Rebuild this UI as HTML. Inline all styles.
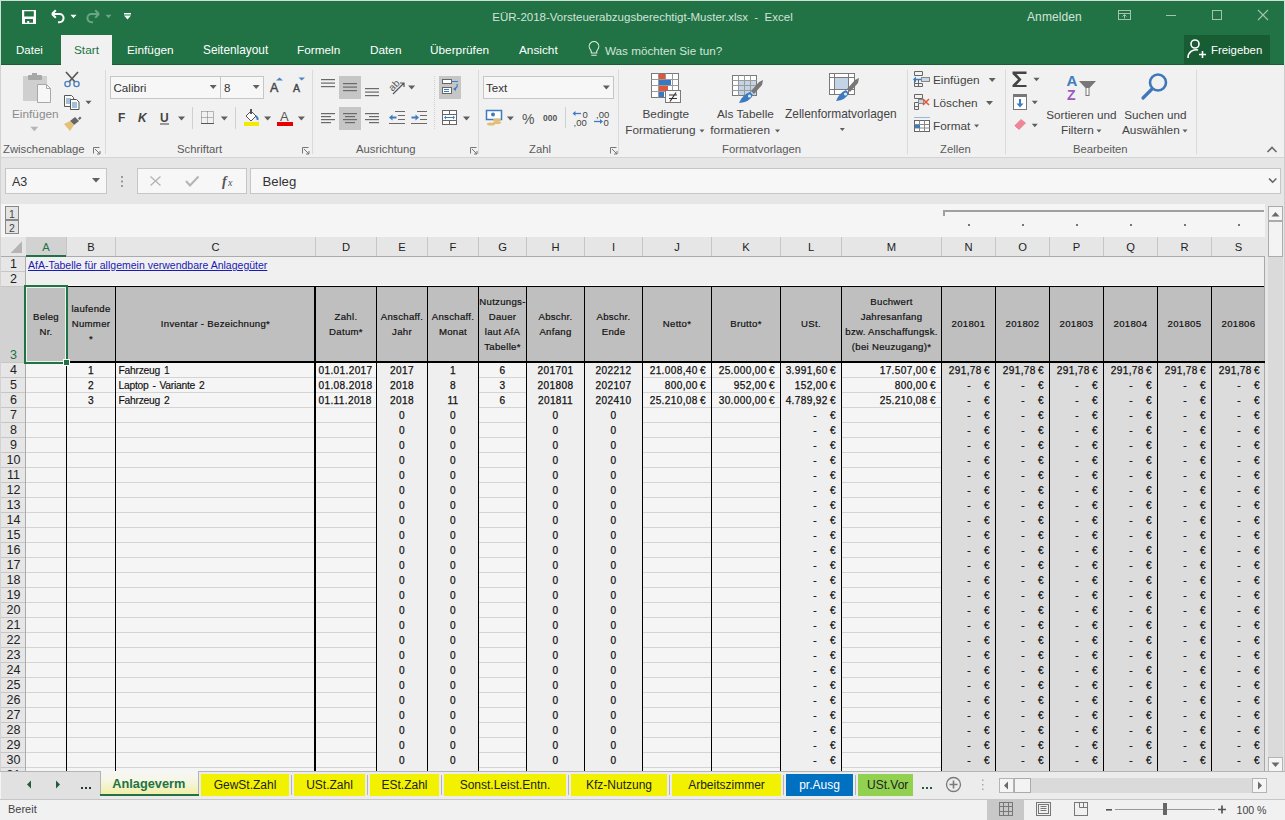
<!DOCTYPE html><html><head><meta charset="utf-8"><style>
*{margin:0;padding:0;box-sizing:border-box}
html,body{width:1285px;height:820px;overflow:hidden;background:#f1f1f1;font-family:"Liberation Sans", sans-serif;position:relative}
.c{position:absolute;height:14px;line-height:14px;font-size:10.1px;letter-spacing:0.35px;margin-top:0.7px;color:#111;white-space:nowrap;-webkit-text-stroke:0.25px #111}
.h{position:absolute;top:286.3px;height:75px;display:flex;align-items:center;justify-content:center;text-align:center;font-size:9.6px;letter-spacing:0.3px;line-height:15px;color:#111;white-space:nowrap;-webkit-text-stroke:0.2px #111}
.b{position:absolute}
</style></head><body>
<div class="b" style="left:0px;top:0px;width:1285px;height:65px;background:#217346"></div>
<div class="b" style="left:0px;top:0px;width:1285px;height:1px;background:#cfe0d5"></div>
<div class="b" style="left:0px;top:0px;width:1px;height:65px;background:#cfe0d5"></div>
<div style="position:absolute;left:442.5px;width:400px;text-align:center;top:12.07px;font-size:11.5px;line-height:11.5px;color:#d3e3d9;white-space:nowrap;">EÜR-2018-Vorsteuerabzugsberechtigt-Muster.xlsx&nbsp; - &nbsp;Excel</div>
<div style="position:absolute;left:1027px;top:10.64px;font-size:12px;line-height:12px;color:#d3e3d9;white-space:nowrap;letter-spacing:0.1px">Anmelden</div>
<div class="b" style="left:61px;top:35px;width:51px;height:30px;background:#f1f1f1"></div>
<div style="position:absolute;left:16px;top:45.27px;font-size:11.5px;line-height:11.5px;color:#ffffff;white-space:nowrap;">Datei</div>
<div style="position:absolute;left:74px;top:45.01px;font-size:11.8px;line-height:11.8px;color:#217346;white-space:nowrap;">Start</div>
<div style="position:absolute;left:127px;top:45.01px;font-size:11.8px;line-height:11.8px;color:#ffffff;white-space:nowrap;">Einfügen</div>
<div style="position:absolute;left:203px;top:44.97px;font-size:11.85px;line-height:11.85px;color:#ffffff;white-space:nowrap;">Seitenlayout</div>
<div style="position:absolute;left:297px;top:45.01px;font-size:11.8px;line-height:11.8px;color:#ffffff;white-space:nowrap;">Formeln</div>
<div style="position:absolute;left:370px;top:45.01px;font-size:11.8px;line-height:11.8px;color:#ffffff;white-space:nowrap;">Daten</div>
<div style="position:absolute;left:430px;top:45.01px;font-size:11.8px;line-height:11.8px;color:#ffffff;white-space:nowrap;">Überprüfen</div>
<div style="position:absolute;left:519px;top:45.01px;font-size:11.8px;line-height:11.8px;color:#ffffff;white-space:nowrap;">Ansicht</div>
<div style="position:absolute;left:605px;top:44.80px;font-size:11.7px;line-height:11.7px;color:#d2e3d8;white-space:nowrap;">Was möchten Sie tun?</div>
<div class="b" style="left:1184px;top:35px;width:86px;height:29px;background:#185c34"></div>
<div style="position:absolute;left:1211px;top:45.35px;font-size:11.4px;line-height:11.4px;color:#ffffff;white-space:nowrap;">Freigeben</div>
<div class="b" style="left:0px;top:65px;width:1285px;height:92px;background:#f1f1f1"></div>
<div class="b" style="left:0px;top:157px;width:1285px;height:1px;background:#d4d4d4"></div>
<div class="b" style="left:105px;top:70px;width:1px;height:84px;background:#dadada"></div>
<div class="b" style="left:312px;top:70px;width:1px;height:84px;background:#dadada"></div>
<div class="b" style="left:478px;top:70px;width:1px;height:84px;background:#dadada"></div>
<div class="b" style="left:618px;top:70px;width:1px;height:84px;background:#dadada"></div>
<div class="b" style="left:907px;top:70px;width:1px;height:84px;background:#dadada"></div>
<div class="b" style="left:1005px;top:70px;width:1px;height:84px;background:#dadada"></div>
<div class="b" style="left:1196px;top:70px;width:1px;height:84px;background:#dadada"></div>
<div style="position:absolute;left:3px;top:144.23px;font-size:11.3px;line-height:11.3px;color:#5a5a5a;white-space:nowrap;">Zwischenablage</div>
<div style="position:absolute;left:177px;top:144.23px;font-size:11.3px;line-height:11.3px;color:#5a5a5a;white-space:nowrap;">Schriftart</div>
<div style="position:absolute;left:356px;top:144.23px;font-size:11.3px;line-height:11.3px;color:#5a5a5a;white-space:nowrap;">Ausrichtung</div>
<div style="position:absolute;left:529px;top:144.23px;font-size:11.3px;line-height:11.3px;color:#5a5a5a;white-space:nowrap;">Zahl</div>
<div style="position:absolute;left:722px;top:144.23px;font-size:11.3px;line-height:11.3px;color:#5a5a5a;white-space:nowrap;">Formatvorlagen</div>
<div style="position:absolute;left:940px;top:144.23px;font-size:11.3px;line-height:11.3px;color:#5a5a5a;white-space:nowrap;">Zellen</div>
<div style="position:absolute;left:1073px;top:144.23px;font-size:11.3px;line-height:11.3px;color:#5a5a5a;white-space:nowrap;">Bearbeiten</div>
<div style="position:absolute;left:12px;top:109.01px;font-size:11.8px;line-height:11.8px;color:#8c8c8c;white-space:nowrap;">Einfügen</div>
<div class="b" style="left:110px;top:76px;width:111px;height:23px;background:#f7f7f7;border:1px solid #c6c6c6"></div>
<div class="b" style="left:220px;top:76px;width:44px;height:23px;background:#f7f7f7;border:1px solid #c6c6c6"></div>
<div style="position:absolute;left:113.5px;top:82.18px;font-size:11.6px;line-height:11.6px;color:#333;white-space:nowrap;">Calibri</div>
<div style="position:absolute;left:224px;top:82.18px;font-size:11.6px;line-height:11.6px;color:#333;white-space:nowrap;">8</div>
<div class="b" style="left:483px;top:76px;width:131px;height:23px;background:#f7f7f7;border:1px solid #c6c6c6"></div>
<div style="position:absolute;left:486px;top:82.18px;font-size:11.6px;line-height:11.6px;color:#333;white-space:nowrap;">Text</div>
<div style="position:absolute;left:642.5px;top:109.01px;font-size:11.8px;line-height:11.8px;color:#444;white-space:nowrap;">Bedingte</div>
<div style="position:absolute;left:625.3px;top:125.01px;font-size:11.8px;line-height:11.8px;color:#444;white-space:nowrap;">Formatierung</div>
<div style="position:absolute;left:717px;top:109.01px;font-size:11.8px;line-height:11.8px;color:#444;white-space:nowrap;">Als Tabelle</div>
<div style="position:absolute;left:710.3px;top:125.01px;font-size:11.8px;line-height:11.8px;color:#444;white-space:nowrap;">formatieren</div>
<div style="position:absolute;left:785px;top:108.93px;font-size:11.9px;line-height:11.9px;color:#444;white-space:nowrap;">Zellenformatvorlagen</div>
<div style="position:absolute;left:933px;top:75.31px;font-size:11.8px;line-height:11.8px;color:#444;white-space:nowrap;">Einfügen</div>
<div style="position:absolute;left:933px;top:98.31px;font-size:11.8px;line-height:11.8px;color:#444;white-space:nowrap;">Löschen</div>
<div style="position:absolute;left:933px;top:121.31px;font-size:11.8px;line-height:11.8px;color:#444;white-space:nowrap;">Format</div>
<div style="position:absolute;left:1046.3px;top:109.10px;font-size:11.7px;line-height:11.7px;color:#444;white-space:nowrap;">Sortieren und</div>
<div style="position:absolute;left:1061px;top:125.01px;font-size:11.8px;line-height:11.8px;color:#444;white-space:nowrap;">Filtern</div>
<div style="position:absolute;left:1124.2px;top:109.10px;font-size:11.7px;line-height:11.7px;color:#444;white-space:nowrap;">Suchen und</div>
<div style="position:absolute;left:1122px;top:125.01px;font-size:11.8px;line-height:11.8px;color:#444;white-space:nowrap;">Auswählen</div>
<div class="b" style="left:339px;top:76px;width:22px;height:23px;background:#c6c6c6"></div>
<div class="b" style="left:339px;top:107px;width:22px;height:23px;background:#c6c6c6"></div>
<div class="b" style="left:439px;top:76px;width:22px;height:23px;background:#c6c6c6"></div>
<div class="b" style="left:0px;top:158px;width:1285px;height:46px;background:#e6e6e6"></div>
<div class="b" style="left:5px;top:168px;width:102px;height:26px;background:#f7f7f7;border:1px solid #c6c6c6"></div>
<div style="position:absolute;left:12px;top:176.42px;font-size:12.5px;line-height:12.5px;color:#333;white-space:nowrap;">A3</div>
<div class="b" style="left:137px;top:168px;width:110px;height:26px;background:#f7f7f7;border:1px solid #c6c6c6"></div>
<div class="b" style="left:250px;top:168px;width:1031px;height:26px;background:#f7f7f7;border:1px solid #c6c6c6"></div>
<div style="position:absolute;left:262.5px;top:174.83px;font-size:13.2px;line-height:13.2px;color:#333;white-space:nowrap;">Beleg</div>
<div class="b" style="left:0px;top:204px;width:1265px;height:33px;background:#f5f5f5"></div>
<div class="b" style="left:0px;top:237px;width:1265px;height:19px;background:#e6e6e6"></div>
<div class="b" style="left:0px;top:256px;width:1265px;height:1px;background:#ababab"></div>
<div class="b" style="left:26px;top:237px;width:40px;height:18px;background:#d2d2d2"></div>
<div class="b" style="left:26px;top:255px;width:40px;height:2px;background:#217346"></div>
<svg style="position:absolute;left:0;top:237px" width="25" height="19"><polygon points="22,4.3 22,16 10.6,16" fill="#b4b4b4"/></svg>
<div class="b" style="left:66px;top:237px;width:1px;height:19px;background:#c6c6c6"></div>
<div style="position:absolute;left:-154.0px;width:400px;text-align:center;top:241.92px;font-size:11.2px;line-height:11.2px;color:#217346;white-space:nowrap;">A</div>
<div class="b" style="left:115px;top:237px;width:1px;height:19px;background:#c6c6c6"></div>
<div style="position:absolute;left:-109.0px;width:400px;text-align:center;top:241.92px;font-size:11.2px;line-height:11.2px;color:#222;white-space:nowrap;">B</div>
<div class="b" style="left:315px;top:237px;width:1px;height:19px;background:#c6c6c6"></div>
<div style="position:absolute;left:15.5px;width:400px;text-align:center;top:241.92px;font-size:11.2px;line-height:11.2px;color:#222;white-space:nowrap;">C</div>
<div class="b" style="left:376px;top:237px;width:1px;height:19px;background:#c6c6c6"></div>
<div style="position:absolute;left:146.0px;width:400px;text-align:center;top:241.92px;font-size:11.2px;line-height:11.2px;color:#222;white-space:nowrap;">D</div>
<div class="b" style="left:427px;top:237px;width:1px;height:19px;background:#c6c6c6"></div>
<div style="position:absolute;left:202.0px;width:400px;text-align:center;top:241.92px;font-size:11.2px;line-height:11.2px;color:#222;white-space:nowrap;">E</div>
<div class="b" style="left:478px;top:237px;width:1px;height:19px;background:#c6c6c6"></div>
<div style="position:absolute;left:253.0px;width:400px;text-align:center;top:241.92px;font-size:11.2px;line-height:11.2px;color:#222;white-space:nowrap;">F</div>
<div class="b" style="left:526px;top:237px;width:1px;height:19px;background:#c6c6c6"></div>
<div style="position:absolute;left:302.5px;width:400px;text-align:center;top:241.92px;font-size:11.2px;line-height:11.2px;color:#222;white-space:nowrap;">G</div>
<div class="b" style="left:584px;top:237px;width:1px;height:19px;background:#c6c6c6"></div>
<div style="position:absolute;left:355.5px;width:400px;text-align:center;top:241.92px;font-size:11.2px;line-height:11.2px;color:#222;white-space:nowrap;">H</div>
<div class="b" style="left:642px;top:237px;width:1px;height:19px;background:#c6c6c6"></div>
<div style="position:absolute;left:413.5px;width:400px;text-align:center;top:241.92px;font-size:11.2px;line-height:11.2px;color:#222;white-space:nowrap;">I</div>
<div class="b" style="left:711px;top:237px;width:1px;height:19px;background:#c6c6c6"></div>
<div style="position:absolute;left:477.0px;width:400px;text-align:center;top:241.92px;font-size:11.2px;line-height:11.2px;color:#222;white-space:nowrap;">J</div>
<div class="b" style="left:780px;top:237px;width:1px;height:19px;background:#c6c6c6"></div>
<div style="position:absolute;left:546.0px;width:400px;text-align:center;top:241.92px;font-size:11.2px;line-height:11.2px;color:#222;white-space:nowrap;">K</div>
<div class="b" style="left:841px;top:237px;width:1px;height:19px;background:#c6c6c6"></div>
<div style="position:absolute;left:611.0px;width:400px;text-align:center;top:241.92px;font-size:11.2px;line-height:11.2px;color:#222;white-space:nowrap;">L</div>
<div class="b" style="left:941px;top:237px;width:1px;height:19px;background:#c6c6c6"></div>
<div style="position:absolute;left:691.5px;width:400px;text-align:center;top:241.92px;font-size:11.2px;line-height:11.2px;color:#222;white-space:nowrap;">M</div>
<div class="b" style="left:995px;top:237px;width:1px;height:19px;background:#c6c6c6"></div>
<div style="position:absolute;left:768.5px;width:400px;text-align:center;top:241.92px;font-size:11.2px;line-height:11.2px;color:#222;white-space:nowrap;">N</div>
<div class="b" style="left:1049px;top:237px;width:1px;height:19px;background:#c6c6c6"></div>
<div style="position:absolute;left:822.5px;width:400px;text-align:center;top:241.92px;font-size:11.2px;line-height:11.2px;color:#222;white-space:nowrap;">O</div>
<div class="b" style="left:1103px;top:237px;width:1px;height:19px;background:#c6c6c6"></div>
<div style="position:absolute;left:876.5px;width:400px;text-align:center;top:241.92px;font-size:11.2px;line-height:11.2px;color:#222;white-space:nowrap;">P</div>
<div class="b" style="left:1157px;top:237px;width:1px;height:19px;background:#c6c6c6"></div>
<div style="position:absolute;left:930.5px;width:400px;text-align:center;top:241.92px;font-size:11.2px;line-height:11.2px;color:#222;white-space:nowrap;">Q</div>
<div class="b" style="left:1211px;top:237px;width:1px;height:19px;background:#c6c6c6"></div>
<div style="position:absolute;left:984.5px;width:400px;text-align:center;top:241.92px;font-size:11.2px;line-height:11.2px;color:#222;white-space:nowrap;">R</div>
<div class="b" style="left:1265px;top:237px;width:1px;height:19px;background:#c6c6c6"></div>
<div style="position:absolute;left:1038.5px;width:400px;text-align:center;top:241.92px;font-size:11.2px;line-height:11.2px;color:#222;white-space:nowrap;">S</div>
<div class="b" style="left:0px;top:257px;width:25px;height:514px;background:#e6e6e6"></div>
<div class="b" style="left:25px;top:257px;width:1px;height:514px;background:#ababab"></div>
<div class="b" style="left:0px;top:287px;width:25px;height:75px;background:#d2d2d2"></div>
<div class="b" style="left:0px;top:271px;width:25px;height:1px;background:#c6c6c6"></div>
<div style="position:absolute;left:1px;top:257.5px;font-size:12.5px;line-height:1;color:#222;white-space:nowrap;"><div style="width:25px;text-align:center">1</div></div>
<div class="b" style="left:0px;top:286px;width:25px;height:1px;background:#c6c6c6"></div>
<div style="position:absolute;left:1px;top:272.5px;font-size:12.5px;line-height:1;color:#222;white-space:nowrap;"><div style="width:25px;text-align:center">2</div></div>
<div class="b" style="left:0px;top:362px;width:25px;height:1px;background:#c6c6c6"></div>
<div style="position:absolute;left:1px;top:348.5px;font-size:12.5px;line-height:1;color:#217346;white-space:nowrap;"><div style="width:25px;text-align:center">3</div></div>
<div class="b" style="left:0px;top:377px;width:25px;height:1px;background:#c6c6c6"></div>
<div style="position:absolute;left:1px;top:363.5px;font-size:12.5px;line-height:1;color:#222;white-space:nowrap;"><div style="width:25px;text-align:center">4</div></div>
<div class="b" style="left:0px;top:392px;width:25px;height:1px;background:#c6c6c6"></div>
<div style="position:absolute;left:1px;top:378.5px;font-size:12.5px;line-height:1;color:#222;white-space:nowrap;"><div style="width:25px;text-align:center">5</div></div>
<div class="b" style="left:0px;top:407px;width:25px;height:1px;background:#c6c6c6"></div>
<div style="position:absolute;left:1px;top:393.5px;font-size:12.5px;line-height:1;color:#222;white-space:nowrap;"><div style="width:25px;text-align:center">6</div></div>
<div class="b" style="left:0px;top:422px;width:25px;height:1px;background:#c6c6c6"></div>
<div style="position:absolute;left:1px;top:408.5px;font-size:12.5px;line-height:1;color:#222;white-space:nowrap;"><div style="width:25px;text-align:center">7</div></div>
<div class="b" style="left:0px;top:437px;width:25px;height:1px;background:#c6c6c6"></div>
<div style="position:absolute;left:1px;top:423.5px;font-size:12.5px;line-height:1;color:#222;white-space:nowrap;"><div style="width:25px;text-align:center">8</div></div>
<div class="b" style="left:0px;top:452px;width:25px;height:1px;background:#c6c6c6"></div>
<div style="position:absolute;left:1px;top:438.5px;font-size:12.5px;line-height:1;color:#222;white-space:nowrap;"><div style="width:25px;text-align:center">9</div></div>
<div class="b" style="left:0px;top:467px;width:25px;height:1px;background:#c6c6c6"></div>
<div style="position:absolute;left:1px;top:453.5px;font-size:12.5px;line-height:1;color:#222;white-space:nowrap;"><div style="width:25px;text-align:center">10</div></div>
<div class="b" style="left:0px;top:482px;width:25px;height:1px;background:#c6c6c6"></div>
<div style="position:absolute;left:1px;top:468.5px;font-size:12.5px;line-height:1;color:#222;white-space:nowrap;"><div style="width:25px;text-align:center">11</div></div>
<div class="b" style="left:0px;top:497px;width:25px;height:1px;background:#c6c6c6"></div>
<div style="position:absolute;left:1px;top:483.5px;font-size:12.5px;line-height:1;color:#222;white-space:nowrap;"><div style="width:25px;text-align:center">12</div></div>
<div class="b" style="left:0px;top:512px;width:25px;height:1px;background:#c6c6c6"></div>
<div style="position:absolute;left:1px;top:498.5px;font-size:12.5px;line-height:1;color:#222;white-space:nowrap;"><div style="width:25px;text-align:center">13</div></div>
<div class="b" style="left:0px;top:527px;width:25px;height:1px;background:#c6c6c6"></div>
<div style="position:absolute;left:1px;top:513.5px;font-size:12.5px;line-height:1;color:#222;white-space:nowrap;"><div style="width:25px;text-align:center">14</div></div>
<div class="b" style="left:0px;top:542px;width:25px;height:1px;background:#c6c6c6"></div>
<div style="position:absolute;left:1px;top:528.5px;font-size:12.5px;line-height:1;color:#222;white-space:nowrap;"><div style="width:25px;text-align:center">15</div></div>
<div class="b" style="left:0px;top:557px;width:25px;height:1px;background:#c6c6c6"></div>
<div style="position:absolute;left:1px;top:543.5px;font-size:12.5px;line-height:1;color:#222;white-space:nowrap;"><div style="width:25px;text-align:center">16</div></div>
<div class="b" style="left:0px;top:572px;width:25px;height:1px;background:#c6c6c6"></div>
<div style="position:absolute;left:1px;top:558.5px;font-size:12.5px;line-height:1;color:#222;white-space:nowrap;"><div style="width:25px;text-align:center">17</div></div>
<div class="b" style="left:0px;top:587px;width:25px;height:1px;background:#c6c6c6"></div>
<div style="position:absolute;left:1px;top:573.5px;font-size:12.5px;line-height:1;color:#222;white-space:nowrap;"><div style="width:25px;text-align:center">18</div></div>
<div class="b" style="left:0px;top:602px;width:25px;height:1px;background:#c6c6c6"></div>
<div style="position:absolute;left:1px;top:588.5px;font-size:12.5px;line-height:1;color:#222;white-space:nowrap;"><div style="width:25px;text-align:center">19</div></div>
<div class="b" style="left:0px;top:617px;width:25px;height:1px;background:#c6c6c6"></div>
<div style="position:absolute;left:1px;top:603.5px;font-size:12.5px;line-height:1;color:#222;white-space:nowrap;"><div style="width:25px;text-align:center">20</div></div>
<div class="b" style="left:0px;top:632px;width:25px;height:1px;background:#c6c6c6"></div>
<div style="position:absolute;left:1px;top:618.5px;font-size:12.5px;line-height:1;color:#222;white-space:nowrap;"><div style="width:25px;text-align:center">21</div></div>
<div class="b" style="left:0px;top:647px;width:25px;height:1px;background:#c6c6c6"></div>
<div style="position:absolute;left:1px;top:633.5px;font-size:12.5px;line-height:1;color:#222;white-space:nowrap;"><div style="width:25px;text-align:center">22</div></div>
<div class="b" style="left:0px;top:662px;width:25px;height:1px;background:#c6c6c6"></div>
<div style="position:absolute;left:1px;top:648.5px;font-size:12.5px;line-height:1;color:#222;white-space:nowrap;"><div style="width:25px;text-align:center">23</div></div>
<div class="b" style="left:0px;top:677px;width:25px;height:1px;background:#c6c6c6"></div>
<div style="position:absolute;left:1px;top:663.5px;font-size:12.5px;line-height:1;color:#222;white-space:nowrap;"><div style="width:25px;text-align:center">24</div></div>
<div class="b" style="left:0px;top:692px;width:25px;height:1px;background:#c6c6c6"></div>
<div style="position:absolute;left:1px;top:678.5px;font-size:12.5px;line-height:1;color:#222;white-space:nowrap;"><div style="width:25px;text-align:center">25</div></div>
<div class="b" style="left:0px;top:707px;width:25px;height:1px;background:#c6c6c6"></div>
<div style="position:absolute;left:1px;top:693.5px;font-size:12.5px;line-height:1;color:#222;white-space:nowrap;"><div style="width:25px;text-align:center">26</div></div>
<div class="b" style="left:0px;top:722px;width:25px;height:1px;background:#c6c6c6"></div>
<div style="position:absolute;left:1px;top:708.5px;font-size:12.5px;line-height:1;color:#222;white-space:nowrap;"><div style="width:25px;text-align:center">27</div></div>
<div class="b" style="left:0px;top:737px;width:25px;height:1px;background:#c6c6c6"></div>
<div style="position:absolute;left:1px;top:723.5px;font-size:12.5px;line-height:1;color:#222;white-space:nowrap;"><div style="width:25px;text-align:center">28</div></div>
<div class="b" style="left:0px;top:752px;width:25px;height:1px;background:#c6c6c6"></div>
<div style="position:absolute;left:1px;top:738.5px;font-size:12.5px;line-height:1;color:#222;white-space:nowrap;"><div style="width:25px;text-align:center">29</div></div>
<div class="b" style="left:0px;top:767px;width:25px;height:1px;background:#c6c6c6"></div>
<div style="position:absolute;left:1px;top:753.5px;font-size:12.5px;line-height:1;color:#222;white-space:nowrap;"><div style="width:25px;text-align:center">30</div></div>
<div class="b" style="left:0px;top:782px;width:25px;height:1px;background:#c6c6c6"></div>
<div style="position:absolute;left:1px;top:768.5px;font-size:12.5px;line-height:1;color:#222;white-space:nowrap;"><div style="width:25px;text-align:center">31</div></div>
<div class="b" style="left:26px;top:257px;width:1238px;height:29px;background:#f0f0f0"></div>
<div class="b" style="left:1264px;top:257px;width:1px;height:514px;background:#a8a8a8"></div>
<div style="position:absolute;left:28px;top:260px;font-size:10.5px;line-height:1;color:#1a1ab4;white-space:nowrap;"><u>AfA-Tabelle für allgemein verwendbare Anlagegüter</u></div>
<div class="b" style="left:26px;top:285px;width:1238px;height:1px;background:#fafafa"></div>
<div class="b" style="left:26px;top:286px;width:1238px;height:1px;background:#000"></div>
<div class="b" style="left:26px;top:287px;width:1238px;height:74px;background:#bfbfbf"></div>
<div class="b" style="left:26px;top:361px;width:1239px;height:2px;background:#000"></div>
<div class="b" style="left:26px;top:363px;width:40px;height:408px;background:#f5f5f5"></div>
<div class="b" style="left:26px;top:377px;width:40px;height:1px;background:#d4d4d4"></div>
<div class="b" style="left:26px;top:392px;width:40px;height:1px;background:#d4d4d4"></div>
<div class="b" style="left:26px;top:407px;width:40px;height:1px;background:#d4d4d4"></div>
<div class="b" style="left:26px;top:422px;width:40px;height:1px;background:#d4d4d4"></div>
<div class="b" style="left:26px;top:437px;width:40px;height:1px;background:#d4d4d4"></div>
<div class="b" style="left:26px;top:452px;width:40px;height:1px;background:#d4d4d4"></div>
<div class="b" style="left:26px;top:467px;width:40px;height:1px;background:#d4d4d4"></div>
<div class="b" style="left:26px;top:482px;width:40px;height:1px;background:#d4d4d4"></div>
<div class="b" style="left:26px;top:497px;width:40px;height:1px;background:#d4d4d4"></div>
<div class="b" style="left:26px;top:512px;width:40px;height:1px;background:#d4d4d4"></div>
<div class="b" style="left:26px;top:527px;width:40px;height:1px;background:#d4d4d4"></div>
<div class="b" style="left:26px;top:542px;width:40px;height:1px;background:#d4d4d4"></div>
<div class="b" style="left:26px;top:557px;width:40px;height:1px;background:#d4d4d4"></div>
<div class="b" style="left:26px;top:572px;width:40px;height:1px;background:#d4d4d4"></div>
<div class="b" style="left:26px;top:587px;width:40px;height:1px;background:#d4d4d4"></div>
<div class="b" style="left:26px;top:602px;width:40px;height:1px;background:#d4d4d4"></div>
<div class="b" style="left:26px;top:617px;width:40px;height:1px;background:#d4d4d4"></div>
<div class="b" style="left:26px;top:632px;width:40px;height:1px;background:#d4d4d4"></div>
<div class="b" style="left:26px;top:647px;width:40px;height:1px;background:#d4d4d4"></div>
<div class="b" style="left:26px;top:662px;width:40px;height:1px;background:#d4d4d4"></div>
<div class="b" style="left:26px;top:677px;width:40px;height:1px;background:#d4d4d4"></div>
<div class="b" style="left:26px;top:692px;width:40px;height:1px;background:#d4d4d4"></div>
<div class="b" style="left:26px;top:707px;width:40px;height:1px;background:#d4d4d4"></div>
<div class="b" style="left:26px;top:722px;width:40px;height:1px;background:#d4d4d4"></div>
<div class="b" style="left:26px;top:737px;width:40px;height:1px;background:#d4d4d4"></div>
<div class="b" style="left:26px;top:752px;width:40px;height:1px;background:#d4d4d4"></div>
<div class="b" style="left:26px;top:767px;width:40px;height:1px;background:#d4d4d4"></div>
<div class="b" style="left:26px;top:782px;width:40px;height:1px;background:#d4d4d4"></div>
<div class="b" style="left:67px;top:363px;width:48px;height:408px;background:#f5f5f5"></div>
<div class="b" style="left:67px;top:377px;width:48px;height:1px;background:#d4d4d4"></div>
<div class="b" style="left:67px;top:392px;width:48px;height:1px;background:#d4d4d4"></div>
<div class="b" style="left:67px;top:407px;width:48px;height:1px;background:#d4d4d4"></div>
<div class="b" style="left:67px;top:422px;width:48px;height:1px;background:#d4d4d4"></div>
<div class="b" style="left:67px;top:437px;width:48px;height:1px;background:#d4d4d4"></div>
<div class="b" style="left:67px;top:452px;width:48px;height:1px;background:#d4d4d4"></div>
<div class="b" style="left:67px;top:467px;width:48px;height:1px;background:#d4d4d4"></div>
<div class="b" style="left:67px;top:482px;width:48px;height:1px;background:#d4d4d4"></div>
<div class="b" style="left:67px;top:497px;width:48px;height:1px;background:#d4d4d4"></div>
<div class="b" style="left:67px;top:512px;width:48px;height:1px;background:#d4d4d4"></div>
<div class="b" style="left:67px;top:527px;width:48px;height:1px;background:#d4d4d4"></div>
<div class="b" style="left:67px;top:542px;width:48px;height:1px;background:#d4d4d4"></div>
<div class="b" style="left:67px;top:557px;width:48px;height:1px;background:#d4d4d4"></div>
<div class="b" style="left:67px;top:572px;width:48px;height:1px;background:#d4d4d4"></div>
<div class="b" style="left:67px;top:587px;width:48px;height:1px;background:#d4d4d4"></div>
<div class="b" style="left:67px;top:602px;width:48px;height:1px;background:#d4d4d4"></div>
<div class="b" style="left:67px;top:617px;width:48px;height:1px;background:#d4d4d4"></div>
<div class="b" style="left:67px;top:632px;width:48px;height:1px;background:#d4d4d4"></div>
<div class="b" style="left:67px;top:647px;width:48px;height:1px;background:#d4d4d4"></div>
<div class="b" style="left:67px;top:662px;width:48px;height:1px;background:#d4d4d4"></div>
<div class="b" style="left:67px;top:677px;width:48px;height:1px;background:#d4d4d4"></div>
<div class="b" style="left:67px;top:692px;width:48px;height:1px;background:#d4d4d4"></div>
<div class="b" style="left:67px;top:707px;width:48px;height:1px;background:#d4d4d4"></div>
<div class="b" style="left:67px;top:722px;width:48px;height:1px;background:#d4d4d4"></div>
<div class="b" style="left:67px;top:737px;width:48px;height:1px;background:#d4d4d4"></div>
<div class="b" style="left:67px;top:752px;width:48px;height:1px;background:#d4d4d4"></div>
<div class="b" style="left:67px;top:767px;width:48px;height:1px;background:#d4d4d4"></div>
<div class="b" style="left:67px;top:782px;width:48px;height:1px;background:#d4d4d4"></div>
<div class="b" style="left:116px;top:363px;width:199px;height:408px;background:#f5f5f5"></div>
<div class="b" style="left:116px;top:377px;width:199px;height:1px;background:#d4d4d4"></div>
<div class="b" style="left:116px;top:392px;width:199px;height:1px;background:#d4d4d4"></div>
<div class="b" style="left:116px;top:407px;width:199px;height:1px;background:#d4d4d4"></div>
<div class="b" style="left:116px;top:422px;width:199px;height:1px;background:#d4d4d4"></div>
<div class="b" style="left:116px;top:437px;width:199px;height:1px;background:#d4d4d4"></div>
<div class="b" style="left:116px;top:452px;width:199px;height:1px;background:#d4d4d4"></div>
<div class="b" style="left:116px;top:467px;width:199px;height:1px;background:#d4d4d4"></div>
<div class="b" style="left:116px;top:482px;width:199px;height:1px;background:#d4d4d4"></div>
<div class="b" style="left:116px;top:497px;width:199px;height:1px;background:#d4d4d4"></div>
<div class="b" style="left:116px;top:512px;width:199px;height:1px;background:#d4d4d4"></div>
<div class="b" style="left:116px;top:527px;width:199px;height:1px;background:#d4d4d4"></div>
<div class="b" style="left:116px;top:542px;width:199px;height:1px;background:#d4d4d4"></div>
<div class="b" style="left:116px;top:557px;width:199px;height:1px;background:#d4d4d4"></div>
<div class="b" style="left:116px;top:572px;width:199px;height:1px;background:#d4d4d4"></div>
<div class="b" style="left:116px;top:587px;width:199px;height:1px;background:#d4d4d4"></div>
<div class="b" style="left:116px;top:602px;width:199px;height:1px;background:#d4d4d4"></div>
<div class="b" style="left:116px;top:617px;width:199px;height:1px;background:#d4d4d4"></div>
<div class="b" style="left:116px;top:632px;width:199px;height:1px;background:#d4d4d4"></div>
<div class="b" style="left:116px;top:647px;width:199px;height:1px;background:#d4d4d4"></div>
<div class="b" style="left:116px;top:662px;width:199px;height:1px;background:#d4d4d4"></div>
<div class="b" style="left:116px;top:677px;width:199px;height:1px;background:#d4d4d4"></div>
<div class="b" style="left:116px;top:692px;width:199px;height:1px;background:#d4d4d4"></div>
<div class="b" style="left:116px;top:707px;width:199px;height:1px;background:#d4d4d4"></div>
<div class="b" style="left:116px;top:722px;width:199px;height:1px;background:#d4d4d4"></div>
<div class="b" style="left:116px;top:737px;width:199px;height:1px;background:#d4d4d4"></div>
<div class="b" style="left:116px;top:752px;width:199px;height:1px;background:#d4d4d4"></div>
<div class="b" style="left:116px;top:767px;width:199px;height:1px;background:#d4d4d4"></div>
<div class="b" style="left:116px;top:782px;width:199px;height:1px;background:#d4d4d4"></div>
<div class="b" style="left:316px;top:363px;width:60px;height:408px;background:#f5f5f5"></div>
<div class="b" style="left:316px;top:377px;width:60px;height:1px;background:#d4d4d4"></div>
<div class="b" style="left:316px;top:392px;width:60px;height:1px;background:#d4d4d4"></div>
<div class="b" style="left:316px;top:407px;width:60px;height:1px;background:#d4d4d4"></div>
<div class="b" style="left:316px;top:422px;width:60px;height:1px;background:#d4d4d4"></div>
<div class="b" style="left:316px;top:437px;width:60px;height:1px;background:#d4d4d4"></div>
<div class="b" style="left:316px;top:452px;width:60px;height:1px;background:#d4d4d4"></div>
<div class="b" style="left:316px;top:467px;width:60px;height:1px;background:#d4d4d4"></div>
<div class="b" style="left:316px;top:482px;width:60px;height:1px;background:#d4d4d4"></div>
<div class="b" style="left:316px;top:497px;width:60px;height:1px;background:#d4d4d4"></div>
<div class="b" style="left:316px;top:512px;width:60px;height:1px;background:#d4d4d4"></div>
<div class="b" style="left:316px;top:527px;width:60px;height:1px;background:#d4d4d4"></div>
<div class="b" style="left:316px;top:542px;width:60px;height:1px;background:#d4d4d4"></div>
<div class="b" style="left:316px;top:557px;width:60px;height:1px;background:#d4d4d4"></div>
<div class="b" style="left:316px;top:572px;width:60px;height:1px;background:#d4d4d4"></div>
<div class="b" style="left:316px;top:587px;width:60px;height:1px;background:#d4d4d4"></div>
<div class="b" style="left:316px;top:602px;width:60px;height:1px;background:#d4d4d4"></div>
<div class="b" style="left:316px;top:617px;width:60px;height:1px;background:#d4d4d4"></div>
<div class="b" style="left:316px;top:632px;width:60px;height:1px;background:#d4d4d4"></div>
<div class="b" style="left:316px;top:647px;width:60px;height:1px;background:#d4d4d4"></div>
<div class="b" style="left:316px;top:662px;width:60px;height:1px;background:#d4d4d4"></div>
<div class="b" style="left:316px;top:677px;width:60px;height:1px;background:#d4d4d4"></div>
<div class="b" style="left:316px;top:692px;width:60px;height:1px;background:#d4d4d4"></div>
<div class="b" style="left:316px;top:707px;width:60px;height:1px;background:#d4d4d4"></div>
<div class="b" style="left:316px;top:722px;width:60px;height:1px;background:#d4d4d4"></div>
<div class="b" style="left:316px;top:737px;width:60px;height:1px;background:#d4d4d4"></div>
<div class="b" style="left:316px;top:752px;width:60px;height:1px;background:#d4d4d4"></div>
<div class="b" style="left:316px;top:767px;width:60px;height:1px;background:#d4d4d4"></div>
<div class="b" style="left:316px;top:782px;width:60px;height:1px;background:#d4d4d4"></div>
<div class="b" style="left:377px;top:363px;width:50px;height:408px;background:#efefef"></div>
<div class="b" style="left:428px;top:363px;width:50px;height:408px;background:#efefef"></div>
<div class="b" style="left:479px;top:363px;width:47px;height:408px;background:#f5f5f5"></div>
<div class="b" style="left:479px;top:377px;width:47px;height:1px;background:#d4d4d4"></div>
<div class="b" style="left:479px;top:392px;width:47px;height:1px;background:#d4d4d4"></div>
<div class="b" style="left:479px;top:407px;width:47px;height:1px;background:#d4d4d4"></div>
<div class="b" style="left:479px;top:422px;width:47px;height:1px;background:#d4d4d4"></div>
<div class="b" style="left:479px;top:437px;width:47px;height:1px;background:#d4d4d4"></div>
<div class="b" style="left:479px;top:452px;width:47px;height:1px;background:#d4d4d4"></div>
<div class="b" style="left:479px;top:467px;width:47px;height:1px;background:#d4d4d4"></div>
<div class="b" style="left:479px;top:482px;width:47px;height:1px;background:#d4d4d4"></div>
<div class="b" style="left:479px;top:497px;width:47px;height:1px;background:#d4d4d4"></div>
<div class="b" style="left:479px;top:512px;width:47px;height:1px;background:#d4d4d4"></div>
<div class="b" style="left:479px;top:527px;width:47px;height:1px;background:#d4d4d4"></div>
<div class="b" style="left:479px;top:542px;width:47px;height:1px;background:#d4d4d4"></div>
<div class="b" style="left:479px;top:557px;width:47px;height:1px;background:#d4d4d4"></div>
<div class="b" style="left:479px;top:572px;width:47px;height:1px;background:#d4d4d4"></div>
<div class="b" style="left:479px;top:587px;width:47px;height:1px;background:#d4d4d4"></div>
<div class="b" style="left:479px;top:602px;width:47px;height:1px;background:#d4d4d4"></div>
<div class="b" style="left:479px;top:617px;width:47px;height:1px;background:#d4d4d4"></div>
<div class="b" style="left:479px;top:632px;width:47px;height:1px;background:#d4d4d4"></div>
<div class="b" style="left:479px;top:647px;width:47px;height:1px;background:#d4d4d4"></div>
<div class="b" style="left:479px;top:662px;width:47px;height:1px;background:#d4d4d4"></div>
<div class="b" style="left:479px;top:677px;width:47px;height:1px;background:#d4d4d4"></div>
<div class="b" style="left:479px;top:692px;width:47px;height:1px;background:#d4d4d4"></div>
<div class="b" style="left:479px;top:707px;width:47px;height:1px;background:#d4d4d4"></div>
<div class="b" style="left:479px;top:722px;width:47px;height:1px;background:#d4d4d4"></div>
<div class="b" style="left:479px;top:737px;width:47px;height:1px;background:#d4d4d4"></div>
<div class="b" style="left:479px;top:752px;width:47px;height:1px;background:#d4d4d4"></div>
<div class="b" style="left:479px;top:767px;width:47px;height:1px;background:#d4d4d4"></div>
<div class="b" style="left:479px;top:782px;width:47px;height:1px;background:#d4d4d4"></div>
<div class="b" style="left:527px;top:363px;width:57px;height:408px;background:#efefef"></div>
<div class="b" style="left:585px;top:363px;width:57px;height:408px;background:#efefef"></div>
<div class="b" style="left:643px;top:363px;width:68px;height:408px;background:#f5f5f5"></div>
<div class="b" style="left:643px;top:377px;width:68px;height:1px;background:#d4d4d4"></div>
<div class="b" style="left:643px;top:392px;width:68px;height:1px;background:#d4d4d4"></div>
<div class="b" style="left:643px;top:407px;width:68px;height:1px;background:#d4d4d4"></div>
<div class="b" style="left:643px;top:422px;width:68px;height:1px;background:#d4d4d4"></div>
<div class="b" style="left:643px;top:437px;width:68px;height:1px;background:#d4d4d4"></div>
<div class="b" style="left:643px;top:452px;width:68px;height:1px;background:#d4d4d4"></div>
<div class="b" style="left:643px;top:467px;width:68px;height:1px;background:#d4d4d4"></div>
<div class="b" style="left:643px;top:482px;width:68px;height:1px;background:#d4d4d4"></div>
<div class="b" style="left:643px;top:497px;width:68px;height:1px;background:#d4d4d4"></div>
<div class="b" style="left:643px;top:512px;width:68px;height:1px;background:#d4d4d4"></div>
<div class="b" style="left:643px;top:527px;width:68px;height:1px;background:#d4d4d4"></div>
<div class="b" style="left:643px;top:542px;width:68px;height:1px;background:#d4d4d4"></div>
<div class="b" style="left:643px;top:557px;width:68px;height:1px;background:#d4d4d4"></div>
<div class="b" style="left:643px;top:572px;width:68px;height:1px;background:#d4d4d4"></div>
<div class="b" style="left:643px;top:587px;width:68px;height:1px;background:#d4d4d4"></div>
<div class="b" style="left:643px;top:602px;width:68px;height:1px;background:#d4d4d4"></div>
<div class="b" style="left:643px;top:617px;width:68px;height:1px;background:#d4d4d4"></div>
<div class="b" style="left:643px;top:632px;width:68px;height:1px;background:#d4d4d4"></div>
<div class="b" style="left:643px;top:647px;width:68px;height:1px;background:#d4d4d4"></div>
<div class="b" style="left:643px;top:662px;width:68px;height:1px;background:#d4d4d4"></div>
<div class="b" style="left:643px;top:677px;width:68px;height:1px;background:#d4d4d4"></div>
<div class="b" style="left:643px;top:692px;width:68px;height:1px;background:#d4d4d4"></div>
<div class="b" style="left:643px;top:707px;width:68px;height:1px;background:#d4d4d4"></div>
<div class="b" style="left:643px;top:722px;width:68px;height:1px;background:#d4d4d4"></div>
<div class="b" style="left:643px;top:737px;width:68px;height:1px;background:#d4d4d4"></div>
<div class="b" style="left:643px;top:752px;width:68px;height:1px;background:#d4d4d4"></div>
<div class="b" style="left:643px;top:767px;width:68px;height:1px;background:#d4d4d4"></div>
<div class="b" style="left:643px;top:782px;width:68px;height:1px;background:#d4d4d4"></div>
<div class="b" style="left:712px;top:363px;width:68px;height:408px;background:#f5f5f5"></div>
<div class="b" style="left:712px;top:377px;width:68px;height:1px;background:#d4d4d4"></div>
<div class="b" style="left:712px;top:392px;width:68px;height:1px;background:#d4d4d4"></div>
<div class="b" style="left:712px;top:407px;width:68px;height:1px;background:#d4d4d4"></div>
<div class="b" style="left:712px;top:422px;width:68px;height:1px;background:#d4d4d4"></div>
<div class="b" style="left:712px;top:437px;width:68px;height:1px;background:#d4d4d4"></div>
<div class="b" style="left:712px;top:452px;width:68px;height:1px;background:#d4d4d4"></div>
<div class="b" style="left:712px;top:467px;width:68px;height:1px;background:#d4d4d4"></div>
<div class="b" style="left:712px;top:482px;width:68px;height:1px;background:#d4d4d4"></div>
<div class="b" style="left:712px;top:497px;width:68px;height:1px;background:#d4d4d4"></div>
<div class="b" style="left:712px;top:512px;width:68px;height:1px;background:#d4d4d4"></div>
<div class="b" style="left:712px;top:527px;width:68px;height:1px;background:#d4d4d4"></div>
<div class="b" style="left:712px;top:542px;width:68px;height:1px;background:#d4d4d4"></div>
<div class="b" style="left:712px;top:557px;width:68px;height:1px;background:#d4d4d4"></div>
<div class="b" style="left:712px;top:572px;width:68px;height:1px;background:#d4d4d4"></div>
<div class="b" style="left:712px;top:587px;width:68px;height:1px;background:#d4d4d4"></div>
<div class="b" style="left:712px;top:602px;width:68px;height:1px;background:#d4d4d4"></div>
<div class="b" style="left:712px;top:617px;width:68px;height:1px;background:#d4d4d4"></div>
<div class="b" style="left:712px;top:632px;width:68px;height:1px;background:#d4d4d4"></div>
<div class="b" style="left:712px;top:647px;width:68px;height:1px;background:#d4d4d4"></div>
<div class="b" style="left:712px;top:662px;width:68px;height:1px;background:#d4d4d4"></div>
<div class="b" style="left:712px;top:677px;width:68px;height:1px;background:#d4d4d4"></div>
<div class="b" style="left:712px;top:692px;width:68px;height:1px;background:#d4d4d4"></div>
<div class="b" style="left:712px;top:707px;width:68px;height:1px;background:#d4d4d4"></div>
<div class="b" style="left:712px;top:722px;width:68px;height:1px;background:#d4d4d4"></div>
<div class="b" style="left:712px;top:737px;width:68px;height:1px;background:#d4d4d4"></div>
<div class="b" style="left:712px;top:752px;width:68px;height:1px;background:#d4d4d4"></div>
<div class="b" style="left:712px;top:767px;width:68px;height:1px;background:#d4d4d4"></div>
<div class="b" style="left:712px;top:782px;width:68px;height:1px;background:#d4d4d4"></div>
<div class="b" style="left:781px;top:363px;width:60px;height:408px;background:#efefef"></div>
<div class="b" style="left:842px;top:363px;width:99px;height:408px;background:#f5f5f5"></div>
<div class="b" style="left:842px;top:377px;width:99px;height:1px;background:#d4d4d4"></div>
<div class="b" style="left:842px;top:392px;width:99px;height:1px;background:#d4d4d4"></div>
<div class="b" style="left:842px;top:407px;width:99px;height:1px;background:#d4d4d4"></div>
<div class="b" style="left:842px;top:422px;width:99px;height:1px;background:#d4d4d4"></div>
<div class="b" style="left:842px;top:437px;width:99px;height:1px;background:#d4d4d4"></div>
<div class="b" style="left:842px;top:452px;width:99px;height:1px;background:#d4d4d4"></div>
<div class="b" style="left:842px;top:467px;width:99px;height:1px;background:#d4d4d4"></div>
<div class="b" style="left:842px;top:482px;width:99px;height:1px;background:#d4d4d4"></div>
<div class="b" style="left:842px;top:497px;width:99px;height:1px;background:#d4d4d4"></div>
<div class="b" style="left:842px;top:512px;width:99px;height:1px;background:#d4d4d4"></div>
<div class="b" style="left:842px;top:527px;width:99px;height:1px;background:#d4d4d4"></div>
<div class="b" style="left:842px;top:542px;width:99px;height:1px;background:#d4d4d4"></div>
<div class="b" style="left:842px;top:557px;width:99px;height:1px;background:#d4d4d4"></div>
<div class="b" style="left:842px;top:572px;width:99px;height:1px;background:#d4d4d4"></div>
<div class="b" style="left:842px;top:587px;width:99px;height:1px;background:#d4d4d4"></div>
<div class="b" style="left:842px;top:602px;width:99px;height:1px;background:#d4d4d4"></div>
<div class="b" style="left:842px;top:617px;width:99px;height:1px;background:#d4d4d4"></div>
<div class="b" style="left:842px;top:632px;width:99px;height:1px;background:#d4d4d4"></div>
<div class="b" style="left:842px;top:647px;width:99px;height:1px;background:#d4d4d4"></div>
<div class="b" style="left:842px;top:662px;width:99px;height:1px;background:#d4d4d4"></div>
<div class="b" style="left:842px;top:677px;width:99px;height:1px;background:#d4d4d4"></div>
<div class="b" style="left:842px;top:692px;width:99px;height:1px;background:#d4d4d4"></div>
<div class="b" style="left:842px;top:707px;width:99px;height:1px;background:#d4d4d4"></div>
<div class="b" style="left:842px;top:722px;width:99px;height:1px;background:#d4d4d4"></div>
<div class="b" style="left:842px;top:737px;width:99px;height:1px;background:#d4d4d4"></div>
<div class="b" style="left:842px;top:752px;width:99px;height:1px;background:#d4d4d4"></div>
<div class="b" style="left:842px;top:767px;width:99px;height:1px;background:#d4d4d4"></div>
<div class="b" style="left:842px;top:782px;width:99px;height:1px;background:#d4d4d4"></div>
<div class="b" style="left:942px;top:363px;width:53px;height:408px;background:#dcdcdc"></div>
<div class="b" style="left:996px;top:363px;width:53px;height:408px;background:#dcdcdc"></div>
<div class="b" style="left:1050px;top:363px;width:53px;height:408px;background:#dcdcdc"></div>
<div class="b" style="left:1104px;top:363px;width:53px;height:408px;background:#dcdcdc"></div>
<div class="b" style="left:1158px;top:363px;width:53px;height:408px;background:#dcdcdc"></div>
<div class="b" style="left:1212px;top:363px;width:52px;height:408px;background:#dcdcdc"></div>
<div class="b" style="left:66px;top:286px;width:1px;height:485px;background:#000"></div>
<div class="b" style="left:115px;top:286px;width:1px;height:485px;background:#000"></div>
<div class="b" style="left:314px;top:286px;width:2px;height:485px;background:#000"></div>
<div class="b" style="left:376px;top:286px;width:1px;height:485px;background:#000"></div>
<div class="b" style="left:427px;top:286px;width:1px;height:485px;background:#000"></div>
<div class="b" style="left:478px;top:286px;width:1px;height:485px;background:#000"></div>
<div class="b" style="left:526px;top:286px;width:1px;height:485px;background:#000"></div>
<div class="b" style="left:584px;top:286px;width:1px;height:485px;background:#000"></div>
<div class="b" style="left:642px;top:286px;width:1px;height:485px;background:#000"></div>
<div class="b" style="left:711px;top:286px;width:1px;height:485px;background:#000"></div>
<div class="b" style="left:780px;top:286px;width:1px;height:485px;background:#000"></div>
<div class="b" style="left:841px;top:286px;width:1px;height:485px;background:#000"></div>
<div class="b" style="left:941px;top:286px;width:1px;height:485px;background:#000"></div>
<div class="b" style="left:995px;top:286px;width:1px;height:485px;background:#000"></div>
<div class="b" style="left:1049px;top:286px;width:1px;height:485px;background:#000"></div>
<div class="b" style="left:1103px;top:286px;width:1px;height:485px;background:#000"></div>
<div class="b" style="left:1157px;top:286px;width:1px;height:485px;background:#000"></div>
<div class="b" style="left:1211px;top:286px;width:1px;height:485px;background:#000"></div>
<div class="h" style="left:26px;width:40px">Beleg<br>Nr.</div>
<div class="h" style="left:67px;width:48px">laufende<br>Nummer<br>*</div>
<div class="h" style="left:116px;width:199px">Inventar - Bezeichnung*</div>
<div class="h" style="left:316px;width:60px">Zahl.<br>Datum*</div>
<div class="h" style="left:377px;width:50px">Anschaff.<br>Jahr</div>
<div class="h" style="left:428px;width:50px">Anschaff.<br>Monat</div>
<div class="h" style="left:479px;width:47px">Nutzungs-<br>Dauer<br>laut AfA<br>Tabelle*</div>
<div class="h" style="left:527px;width:57px">Abschr.<br>Anfang</div>
<div class="h" style="left:585px;width:57px">Abschr.<br>Ende</div>
<div class="h" style="left:643px;width:68px">Netto*</div>
<div class="h" style="left:712px;width:68px">Brutto*</div>
<div class="h" style="left:781px;width:60px">USt.</div>
<div class="h" style="left:842px;width:99px">Buchwert<br>Jahresanfang<br>bzw. Anschaffungsk.<br>(bei Neuzugang)*</div>
<div class="h" style="left:942px;width:53px">201801</div>
<div class="h" style="left:996px;width:53px">201802</div>
<div class="h" style="left:1050px;width:53px">201803</div>
<div class="h" style="left:1104px;width:53px">201804</div>
<div class="h" style="left:1158px;width:53px">201805</div>
<div class="h" style="left:1212px;width:53px">201806</div>
<div class="c" style="left:67px;top:363px;width:48px;text-align:center;">1</div>
<div class="c" style="left:116px;top:363px;width:199px;text-align:left;padding-left:2.5px"><span style="font-size:10.3px;letter-spacing:-0.25px;word-spacing:1.3px;-webkit-text-stroke:0.15px #111">Fahrzeug 1</span></div>
<div class="c" style="left:316px;top:363px;width:60px;text-align:left;padding-left:2.5px">01.01.2017</div>
<div class="c" style="left:377px;top:363px;width:50px;text-align:center;">2017</div>
<div class="c" style="left:428px;top:363px;width:50px;text-align:center;">1</div>
<div class="c" style="left:479px;top:363px;width:47px;text-align:center;">6</div>
<div class="c" style="left:527px;top:363px;width:57px;text-align:center;">201701</div>
<div class="c" style="left:585px;top:363px;width:57px;text-align:center;">202212</div>
<div class="c" style="left:623px;top:363px;width:83px;text-align:right">21.008,40<span style="margin-left:2.3px">€</span></div>
<div class="c" style="left:692px;top:363px;width:83px;text-align:right">25.000,00<span style="margin-left:2.3px">€</span></div>
<div class="c" style="left:761px;top:363px;width:75px;text-align:right">3.991,60<span style="margin-left:2.3px">€</span></div>
<div class="c" style="left:822px;top:363px;width:114px;text-align:right">17.507,00<span style="margin-left:2.3px">€</span></div>
<div class="c" style="left:922px;top:363px;width:68px;text-align:right">291,78<span style="margin-left:2.3px">€</span></div>
<div class="c" style="left:976px;top:363px;width:68px;text-align:right">291,78<span style="margin-left:2.3px">€</span></div>
<div class="c" style="left:1030px;top:363px;width:68px;text-align:right">291,78<span style="margin-left:2.3px">€</span></div>
<div class="c" style="left:1084px;top:363px;width:68px;text-align:right">291,78<span style="margin-left:2.3px">€</span></div>
<div class="c" style="left:1138px;top:363px;width:68px;text-align:right">291,78<span style="margin-left:2.3px">€</span></div>
<div class="c" style="left:1192px;top:363px;width:68px;text-align:right">291,78<span style="margin-left:2.3px">€</span></div>
<div class="c" style="left:67px;top:378px;width:48px;text-align:center;">2</div>
<div class="c" style="left:116px;top:378px;width:199px;text-align:left;padding-left:2.5px"><span style="font-size:10.3px;letter-spacing:-0.25px;word-spacing:1.3px;-webkit-text-stroke:0.15px #111">Laptop - Variante 2</span></div>
<div class="c" style="left:316px;top:378px;width:60px;text-align:left;padding-left:2.5px">01.08.2018</div>
<div class="c" style="left:377px;top:378px;width:50px;text-align:center;">2018</div>
<div class="c" style="left:428px;top:378px;width:50px;text-align:center;">8</div>
<div class="c" style="left:479px;top:378px;width:47px;text-align:center;">3</div>
<div class="c" style="left:527px;top:378px;width:57px;text-align:center;">201808</div>
<div class="c" style="left:585px;top:378px;width:57px;text-align:center;">202107</div>
<div class="c" style="left:623px;top:378px;width:83px;text-align:right">800,00<span style="margin-left:2.3px">€</span></div>
<div class="c" style="left:692px;top:378px;width:83px;text-align:right">952,00<span style="margin-left:2.3px">€</span></div>
<div class="c" style="left:761px;top:378px;width:75px;text-align:right">152,00<span style="margin-left:2.3px">€</span></div>
<div class="c" style="left:822px;top:378px;width:114px;text-align:right">800,00<span style="margin-left:2.3px">€</span></div>
<div class="c" style="left:965px;top:378px;width:8px;text-align:center">-</div>
<div class="c" style="left:942px;top:378px;width:48px;text-align:right">€</div>
<div class="c" style="left:1019px;top:378px;width:8px;text-align:center">-</div>
<div class="c" style="left:996px;top:378px;width:48px;text-align:right">€</div>
<div class="c" style="left:1073px;top:378px;width:8px;text-align:center">-</div>
<div class="c" style="left:1050px;top:378px;width:48px;text-align:right">€</div>
<div class="c" style="left:1127px;top:378px;width:8px;text-align:center">-</div>
<div class="c" style="left:1104px;top:378px;width:48px;text-align:right">€</div>
<div class="c" style="left:1181px;top:378px;width:8px;text-align:center">-</div>
<div class="c" style="left:1158px;top:378px;width:48px;text-align:right">€</div>
<div class="c" style="left:1235px;top:378px;width:8px;text-align:center">-</div>
<div class="c" style="left:1212px;top:378px;width:48px;text-align:right">€</div>
<div class="c" style="left:67px;top:393px;width:48px;text-align:center;">3</div>
<div class="c" style="left:116px;top:393px;width:199px;text-align:left;padding-left:2.5px"><span style="font-size:10.3px;letter-spacing:-0.25px;word-spacing:1.3px;-webkit-text-stroke:0.15px #111">Fahrzeug 2</span></div>
<div class="c" style="left:316px;top:393px;width:60px;text-align:left;padding-left:2.5px">01.11.2018</div>
<div class="c" style="left:377px;top:393px;width:50px;text-align:center;">2018</div>
<div class="c" style="left:428px;top:393px;width:50px;text-align:center;">11</div>
<div class="c" style="left:479px;top:393px;width:47px;text-align:center;">6</div>
<div class="c" style="left:527px;top:393px;width:57px;text-align:center;">201811</div>
<div class="c" style="left:585px;top:393px;width:57px;text-align:center;">202410</div>
<div class="c" style="left:623px;top:393px;width:83px;text-align:right">25.210,08<span style="margin-left:2.3px">€</span></div>
<div class="c" style="left:692px;top:393px;width:83px;text-align:right">30.000,00<span style="margin-left:2.3px">€</span></div>
<div class="c" style="left:761px;top:393px;width:75px;text-align:right">4.789,92<span style="margin-left:2.3px">€</span></div>
<div class="c" style="left:822px;top:393px;width:114px;text-align:right">25.210,08<span style="margin-left:2.3px">€</span></div>
<div class="c" style="left:965px;top:393px;width:8px;text-align:center">-</div>
<div class="c" style="left:942px;top:393px;width:48px;text-align:right">€</div>
<div class="c" style="left:1019px;top:393px;width:8px;text-align:center">-</div>
<div class="c" style="left:996px;top:393px;width:48px;text-align:right">€</div>
<div class="c" style="left:1073px;top:393px;width:8px;text-align:center">-</div>
<div class="c" style="left:1050px;top:393px;width:48px;text-align:right">€</div>
<div class="c" style="left:1127px;top:393px;width:8px;text-align:center">-</div>
<div class="c" style="left:1104px;top:393px;width:48px;text-align:right">€</div>
<div class="c" style="left:1181px;top:393px;width:8px;text-align:center">-</div>
<div class="c" style="left:1158px;top:393px;width:48px;text-align:right">€</div>
<div class="c" style="left:1235px;top:393px;width:8px;text-align:center">-</div>
<div class="c" style="left:1212px;top:393px;width:48px;text-align:right">€</div>
<div class="c" style="left:377px;top:408px;width:50px;text-align:center;">0</div>
<div class="c" style="left:428px;top:408px;width:50px;text-align:center;">0</div>
<div class="c" style="left:527px;top:408px;width:57px;text-align:center;">0</div>
<div class="c" style="left:585px;top:408px;width:57px;text-align:center;">0</div>
<div class="c" style="left:811px;top:408px;width:8px;text-align:center">-</div>
<div class="c" style="left:781px;top:408px;width:55px;text-align:right">€</div>
<div class="c" style="left:965px;top:408px;width:8px;text-align:center">-</div>
<div class="c" style="left:942px;top:408px;width:48px;text-align:right">€</div>
<div class="c" style="left:1019px;top:408px;width:8px;text-align:center">-</div>
<div class="c" style="left:996px;top:408px;width:48px;text-align:right">€</div>
<div class="c" style="left:1073px;top:408px;width:8px;text-align:center">-</div>
<div class="c" style="left:1050px;top:408px;width:48px;text-align:right">€</div>
<div class="c" style="left:1127px;top:408px;width:8px;text-align:center">-</div>
<div class="c" style="left:1104px;top:408px;width:48px;text-align:right">€</div>
<div class="c" style="left:1181px;top:408px;width:8px;text-align:center">-</div>
<div class="c" style="left:1158px;top:408px;width:48px;text-align:right">€</div>
<div class="c" style="left:1235px;top:408px;width:8px;text-align:center">-</div>
<div class="c" style="left:1212px;top:408px;width:48px;text-align:right">€</div>
<div class="c" style="left:377px;top:423px;width:50px;text-align:center;">0</div>
<div class="c" style="left:428px;top:423px;width:50px;text-align:center;">0</div>
<div class="c" style="left:527px;top:423px;width:57px;text-align:center;">0</div>
<div class="c" style="left:585px;top:423px;width:57px;text-align:center;">0</div>
<div class="c" style="left:811px;top:423px;width:8px;text-align:center">-</div>
<div class="c" style="left:781px;top:423px;width:55px;text-align:right">€</div>
<div class="c" style="left:965px;top:423px;width:8px;text-align:center">-</div>
<div class="c" style="left:942px;top:423px;width:48px;text-align:right">€</div>
<div class="c" style="left:1019px;top:423px;width:8px;text-align:center">-</div>
<div class="c" style="left:996px;top:423px;width:48px;text-align:right">€</div>
<div class="c" style="left:1073px;top:423px;width:8px;text-align:center">-</div>
<div class="c" style="left:1050px;top:423px;width:48px;text-align:right">€</div>
<div class="c" style="left:1127px;top:423px;width:8px;text-align:center">-</div>
<div class="c" style="left:1104px;top:423px;width:48px;text-align:right">€</div>
<div class="c" style="left:1181px;top:423px;width:8px;text-align:center">-</div>
<div class="c" style="left:1158px;top:423px;width:48px;text-align:right">€</div>
<div class="c" style="left:1235px;top:423px;width:8px;text-align:center">-</div>
<div class="c" style="left:1212px;top:423px;width:48px;text-align:right">€</div>
<div class="c" style="left:377px;top:438px;width:50px;text-align:center;">0</div>
<div class="c" style="left:428px;top:438px;width:50px;text-align:center;">0</div>
<div class="c" style="left:527px;top:438px;width:57px;text-align:center;">0</div>
<div class="c" style="left:585px;top:438px;width:57px;text-align:center;">0</div>
<div class="c" style="left:811px;top:438px;width:8px;text-align:center">-</div>
<div class="c" style="left:781px;top:438px;width:55px;text-align:right">€</div>
<div class="c" style="left:965px;top:438px;width:8px;text-align:center">-</div>
<div class="c" style="left:942px;top:438px;width:48px;text-align:right">€</div>
<div class="c" style="left:1019px;top:438px;width:8px;text-align:center">-</div>
<div class="c" style="left:996px;top:438px;width:48px;text-align:right">€</div>
<div class="c" style="left:1073px;top:438px;width:8px;text-align:center">-</div>
<div class="c" style="left:1050px;top:438px;width:48px;text-align:right">€</div>
<div class="c" style="left:1127px;top:438px;width:8px;text-align:center">-</div>
<div class="c" style="left:1104px;top:438px;width:48px;text-align:right">€</div>
<div class="c" style="left:1181px;top:438px;width:8px;text-align:center">-</div>
<div class="c" style="left:1158px;top:438px;width:48px;text-align:right">€</div>
<div class="c" style="left:1235px;top:438px;width:8px;text-align:center">-</div>
<div class="c" style="left:1212px;top:438px;width:48px;text-align:right">€</div>
<div class="c" style="left:377px;top:453px;width:50px;text-align:center;">0</div>
<div class="c" style="left:428px;top:453px;width:50px;text-align:center;">0</div>
<div class="c" style="left:527px;top:453px;width:57px;text-align:center;">0</div>
<div class="c" style="left:585px;top:453px;width:57px;text-align:center;">0</div>
<div class="c" style="left:811px;top:453px;width:8px;text-align:center">-</div>
<div class="c" style="left:781px;top:453px;width:55px;text-align:right">€</div>
<div class="c" style="left:965px;top:453px;width:8px;text-align:center">-</div>
<div class="c" style="left:942px;top:453px;width:48px;text-align:right">€</div>
<div class="c" style="left:1019px;top:453px;width:8px;text-align:center">-</div>
<div class="c" style="left:996px;top:453px;width:48px;text-align:right">€</div>
<div class="c" style="left:1073px;top:453px;width:8px;text-align:center">-</div>
<div class="c" style="left:1050px;top:453px;width:48px;text-align:right">€</div>
<div class="c" style="left:1127px;top:453px;width:8px;text-align:center">-</div>
<div class="c" style="left:1104px;top:453px;width:48px;text-align:right">€</div>
<div class="c" style="left:1181px;top:453px;width:8px;text-align:center">-</div>
<div class="c" style="left:1158px;top:453px;width:48px;text-align:right">€</div>
<div class="c" style="left:1235px;top:453px;width:8px;text-align:center">-</div>
<div class="c" style="left:1212px;top:453px;width:48px;text-align:right">€</div>
<div class="c" style="left:377px;top:468px;width:50px;text-align:center;">0</div>
<div class="c" style="left:428px;top:468px;width:50px;text-align:center;">0</div>
<div class="c" style="left:527px;top:468px;width:57px;text-align:center;">0</div>
<div class="c" style="left:585px;top:468px;width:57px;text-align:center;">0</div>
<div class="c" style="left:811px;top:468px;width:8px;text-align:center">-</div>
<div class="c" style="left:781px;top:468px;width:55px;text-align:right">€</div>
<div class="c" style="left:965px;top:468px;width:8px;text-align:center">-</div>
<div class="c" style="left:942px;top:468px;width:48px;text-align:right">€</div>
<div class="c" style="left:1019px;top:468px;width:8px;text-align:center">-</div>
<div class="c" style="left:996px;top:468px;width:48px;text-align:right">€</div>
<div class="c" style="left:1073px;top:468px;width:8px;text-align:center">-</div>
<div class="c" style="left:1050px;top:468px;width:48px;text-align:right">€</div>
<div class="c" style="left:1127px;top:468px;width:8px;text-align:center">-</div>
<div class="c" style="left:1104px;top:468px;width:48px;text-align:right">€</div>
<div class="c" style="left:1181px;top:468px;width:8px;text-align:center">-</div>
<div class="c" style="left:1158px;top:468px;width:48px;text-align:right">€</div>
<div class="c" style="left:1235px;top:468px;width:8px;text-align:center">-</div>
<div class="c" style="left:1212px;top:468px;width:48px;text-align:right">€</div>
<div class="c" style="left:377px;top:483px;width:50px;text-align:center;">0</div>
<div class="c" style="left:428px;top:483px;width:50px;text-align:center;">0</div>
<div class="c" style="left:527px;top:483px;width:57px;text-align:center;">0</div>
<div class="c" style="left:585px;top:483px;width:57px;text-align:center;">0</div>
<div class="c" style="left:811px;top:483px;width:8px;text-align:center">-</div>
<div class="c" style="left:781px;top:483px;width:55px;text-align:right">€</div>
<div class="c" style="left:965px;top:483px;width:8px;text-align:center">-</div>
<div class="c" style="left:942px;top:483px;width:48px;text-align:right">€</div>
<div class="c" style="left:1019px;top:483px;width:8px;text-align:center">-</div>
<div class="c" style="left:996px;top:483px;width:48px;text-align:right">€</div>
<div class="c" style="left:1073px;top:483px;width:8px;text-align:center">-</div>
<div class="c" style="left:1050px;top:483px;width:48px;text-align:right">€</div>
<div class="c" style="left:1127px;top:483px;width:8px;text-align:center">-</div>
<div class="c" style="left:1104px;top:483px;width:48px;text-align:right">€</div>
<div class="c" style="left:1181px;top:483px;width:8px;text-align:center">-</div>
<div class="c" style="left:1158px;top:483px;width:48px;text-align:right">€</div>
<div class="c" style="left:1235px;top:483px;width:8px;text-align:center">-</div>
<div class="c" style="left:1212px;top:483px;width:48px;text-align:right">€</div>
<div class="c" style="left:377px;top:498px;width:50px;text-align:center;">0</div>
<div class="c" style="left:428px;top:498px;width:50px;text-align:center;">0</div>
<div class="c" style="left:527px;top:498px;width:57px;text-align:center;">0</div>
<div class="c" style="left:585px;top:498px;width:57px;text-align:center;">0</div>
<div class="c" style="left:811px;top:498px;width:8px;text-align:center">-</div>
<div class="c" style="left:781px;top:498px;width:55px;text-align:right">€</div>
<div class="c" style="left:965px;top:498px;width:8px;text-align:center">-</div>
<div class="c" style="left:942px;top:498px;width:48px;text-align:right">€</div>
<div class="c" style="left:1019px;top:498px;width:8px;text-align:center">-</div>
<div class="c" style="left:996px;top:498px;width:48px;text-align:right">€</div>
<div class="c" style="left:1073px;top:498px;width:8px;text-align:center">-</div>
<div class="c" style="left:1050px;top:498px;width:48px;text-align:right">€</div>
<div class="c" style="left:1127px;top:498px;width:8px;text-align:center">-</div>
<div class="c" style="left:1104px;top:498px;width:48px;text-align:right">€</div>
<div class="c" style="left:1181px;top:498px;width:8px;text-align:center">-</div>
<div class="c" style="left:1158px;top:498px;width:48px;text-align:right">€</div>
<div class="c" style="left:1235px;top:498px;width:8px;text-align:center">-</div>
<div class="c" style="left:1212px;top:498px;width:48px;text-align:right">€</div>
<div class="c" style="left:377px;top:513px;width:50px;text-align:center;">0</div>
<div class="c" style="left:428px;top:513px;width:50px;text-align:center;">0</div>
<div class="c" style="left:527px;top:513px;width:57px;text-align:center;">0</div>
<div class="c" style="left:585px;top:513px;width:57px;text-align:center;">0</div>
<div class="c" style="left:811px;top:513px;width:8px;text-align:center">-</div>
<div class="c" style="left:781px;top:513px;width:55px;text-align:right">€</div>
<div class="c" style="left:965px;top:513px;width:8px;text-align:center">-</div>
<div class="c" style="left:942px;top:513px;width:48px;text-align:right">€</div>
<div class="c" style="left:1019px;top:513px;width:8px;text-align:center">-</div>
<div class="c" style="left:996px;top:513px;width:48px;text-align:right">€</div>
<div class="c" style="left:1073px;top:513px;width:8px;text-align:center">-</div>
<div class="c" style="left:1050px;top:513px;width:48px;text-align:right">€</div>
<div class="c" style="left:1127px;top:513px;width:8px;text-align:center">-</div>
<div class="c" style="left:1104px;top:513px;width:48px;text-align:right">€</div>
<div class="c" style="left:1181px;top:513px;width:8px;text-align:center">-</div>
<div class="c" style="left:1158px;top:513px;width:48px;text-align:right">€</div>
<div class="c" style="left:1235px;top:513px;width:8px;text-align:center">-</div>
<div class="c" style="left:1212px;top:513px;width:48px;text-align:right">€</div>
<div class="c" style="left:377px;top:528px;width:50px;text-align:center;">0</div>
<div class="c" style="left:428px;top:528px;width:50px;text-align:center;">0</div>
<div class="c" style="left:527px;top:528px;width:57px;text-align:center;">0</div>
<div class="c" style="left:585px;top:528px;width:57px;text-align:center;">0</div>
<div class="c" style="left:811px;top:528px;width:8px;text-align:center">-</div>
<div class="c" style="left:781px;top:528px;width:55px;text-align:right">€</div>
<div class="c" style="left:965px;top:528px;width:8px;text-align:center">-</div>
<div class="c" style="left:942px;top:528px;width:48px;text-align:right">€</div>
<div class="c" style="left:1019px;top:528px;width:8px;text-align:center">-</div>
<div class="c" style="left:996px;top:528px;width:48px;text-align:right">€</div>
<div class="c" style="left:1073px;top:528px;width:8px;text-align:center">-</div>
<div class="c" style="left:1050px;top:528px;width:48px;text-align:right">€</div>
<div class="c" style="left:1127px;top:528px;width:8px;text-align:center">-</div>
<div class="c" style="left:1104px;top:528px;width:48px;text-align:right">€</div>
<div class="c" style="left:1181px;top:528px;width:8px;text-align:center">-</div>
<div class="c" style="left:1158px;top:528px;width:48px;text-align:right">€</div>
<div class="c" style="left:1235px;top:528px;width:8px;text-align:center">-</div>
<div class="c" style="left:1212px;top:528px;width:48px;text-align:right">€</div>
<div class="c" style="left:377px;top:543px;width:50px;text-align:center;">0</div>
<div class="c" style="left:428px;top:543px;width:50px;text-align:center;">0</div>
<div class="c" style="left:527px;top:543px;width:57px;text-align:center;">0</div>
<div class="c" style="left:585px;top:543px;width:57px;text-align:center;">0</div>
<div class="c" style="left:811px;top:543px;width:8px;text-align:center">-</div>
<div class="c" style="left:781px;top:543px;width:55px;text-align:right">€</div>
<div class="c" style="left:965px;top:543px;width:8px;text-align:center">-</div>
<div class="c" style="left:942px;top:543px;width:48px;text-align:right">€</div>
<div class="c" style="left:1019px;top:543px;width:8px;text-align:center">-</div>
<div class="c" style="left:996px;top:543px;width:48px;text-align:right">€</div>
<div class="c" style="left:1073px;top:543px;width:8px;text-align:center">-</div>
<div class="c" style="left:1050px;top:543px;width:48px;text-align:right">€</div>
<div class="c" style="left:1127px;top:543px;width:8px;text-align:center">-</div>
<div class="c" style="left:1104px;top:543px;width:48px;text-align:right">€</div>
<div class="c" style="left:1181px;top:543px;width:8px;text-align:center">-</div>
<div class="c" style="left:1158px;top:543px;width:48px;text-align:right">€</div>
<div class="c" style="left:1235px;top:543px;width:8px;text-align:center">-</div>
<div class="c" style="left:1212px;top:543px;width:48px;text-align:right">€</div>
<div class="c" style="left:377px;top:558px;width:50px;text-align:center;">0</div>
<div class="c" style="left:428px;top:558px;width:50px;text-align:center;">0</div>
<div class="c" style="left:527px;top:558px;width:57px;text-align:center;">0</div>
<div class="c" style="left:585px;top:558px;width:57px;text-align:center;">0</div>
<div class="c" style="left:811px;top:558px;width:8px;text-align:center">-</div>
<div class="c" style="left:781px;top:558px;width:55px;text-align:right">€</div>
<div class="c" style="left:965px;top:558px;width:8px;text-align:center">-</div>
<div class="c" style="left:942px;top:558px;width:48px;text-align:right">€</div>
<div class="c" style="left:1019px;top:558px;width:8px;text-align:center">-</div>
<div class="c" style="left:996px;top:558px;width:48px;text-align:right">€</div>
<div class="c" style="left:1073px;top:558px;width:8px;text-align:center">-</div>
<div class="c" style="left:1050px;top:558px;width:48px;text-align:right">€</div>
<div class="c" style="left:1127px;top:558px;width:8px;text-align:center">-</div>
<div class="c" style="left:1104px;top:558px;width:48px;text-align:right">€</div>
<div class="c" style="left:1181px;top:558px;width:8px;text-align:center">-</div>
<div class="c" style="left:1158px;top:558px;width:48px;text-align:right">€</div>
<div class="c" style="left:1235px;top:558px;width:8px;text-align:center">-</div>
<div class="c" style="left:1212px;top:558px;width:48px;text-align:right">€</div>
<div class="c" style="left:377px;top:573px;width:50px;text-align:center;">0</div>
<div class="c" style="left:428px;top:573px;width:50px;text-align:center;">0</div>
<div class="c" style="left:527px;top:573px;width:57px;text-align:center;">0</div>
<div class="c" style="left:585px;top:573px;width:57px;text-align:center;">0</div>
<div class="c" style="left:811px;top:573px;width:8px;text-align:center">-</div>
<div class="c" style="left:781px;top:573px;width:55px;text-align:right">€</div>
<div class="c" style="left:965px;top:573px;width:8px;text-align:center">-</div>
<div class="c" style="left:942px;top:573px;width:48px;text-align:right">€</div>
<div class="c" style="left:1019px;top:573px;width:8px;text-align:center">-</div>
<div class="c" style="left:996px;top:573px;width:48px;text-align:right">€</div>
<div class="c" style="left:1073px;top:573px;width:8px;text-align:center">-</div>
<div class="c" style="left:1050px;top:573px;width:48px;text-align:right">€</div>
<div class="c" style="left:1127px;top:573px;width:8px;text-align:center">-</div>
<div class="c" style="left:1104px;top:573px;width:48px;text-align:right">€</div>
<div class="c" style="left:1181px;top:573px;width:8px;text-align:center">-</div>
<div class="c" style="left:1158px;top:573px;width:48px;text-align:right">€</div>
<div class="c" style="left:1235px;top:573px;width:8px;text-align:center">-</div>
<div class="c" style="left:1212px;top:573px;width:48px;text-align:right">€</div>
<div class="c" style="left:377px;top:588px;width:50px;text-align:center;">0</div>
<div class="c" style="left:428px;top:588px;width:50px;text-align:center;">0</div>
<div class="c" style="left:527px;top:588px;width:57px;text-align:center;">0</div>
<div class="c" style="left:585px;top:588px;width:57px;text-align:center;">0</div>
<div class="c" style="left:811px;top:588px;width:8px;text-align:center">-</div>
<div class="c" style="left:781px;top:588px;width:55px;text-align:right">€</div>
<div class="c" style="left:965px;top:588px;width:8px;text-align:center">-</div>
<div class="c" style="left:942px;top:588px;width:48px;text-align:right">€</div>
<div class="c" style="left:1019px;top:588px;width:8px;text-align:center">-</div>
<div class="c" style="left:996px;top:588px;width:48px;text-align:right">€</div>
<div class="c" style="left:1073px;top:588px;width:8px;text-align:center">-</div>
<div class="c" style="left:1050px;top:588px;width:48px;text-align:right">€</div>
<div class="c" style="left:1127px;top:588px;width:8px;text-align:center">-</div>
<div class="c" style="left:1104px;top:588px;width:48px;text-align:right">€</div>
<div class="c" style="left:1181px;top:588px;width:8px;text-align:center">-</div>
<div class="c" style="left:1158px;top:588px;width:48px;text-align:right">€</div>
<div class="c" style="left:1235px;top:588px;width:8px;text-align:center">-</div>
<div class="c" style="left:1212px;top:588px;width:48px;text-align:right">€</div>
<div class="c" style="left:377px;top:603px;width:50px;text-align:center;">0</div>
<div class="c" style="left:428px;top:603px;width:50px;text-align:center;">0</div>
<div class="c" style="left:527px;top:603px;width:57px;text-align:center;">0</div>
<div class="c" style="left:585px;top:603px;width:57px;text-align:center;">0</div>
<div class="c" style="left:811px;top:603px;width:8px;text-align:center">-</div>
<div class="c" style="left:781px;top:603px;width:55px;text-align:right">€</div>
<div class="c" style="left:965px;top:603px;width:8px;text-align:center">-</div>
<div class="c" style="left:942px;top:603px;width:48px;text-align:right">€</div>
<div class="c" style="left:1019px;top:603px;width:8px;text-align:center">-</div>
<div class="c" style="left:996px;top:603px;width:48px;text-align:right">€</div>
<div class="c" style="left:1073px;top:603px;width:8px;text-align:center">-</div>
<div class="c" style="left:1050px;top:603px;width:48px;text-align:right">€</div>
<div class="c" style="left:1127px;top:603px;width:8px;text-align:center">-</div>
<div class="c" style="left:1104px;top:603px;width:48px;text-align:right">€</div>
<div class="c" style="left:1181px;top:603px;width:8px;text-align:center">-</div>
<div class="c" style="left:1158px;top:603px;width:48px;text-align:right">€</div>
<div class="c" style="left:1235px;top:603px;width:8px;text-align:center">-</div>
<div class="c" style="left:1212px;top:603px;width:48px;text-align:right">€</div>
<div class="c" style="left:377px;top:618px;width:50px;text-align:center;">0</div>
<div class="c" style="left:428px;top:618px;width:50px;text-align:center;">0</div>
<div class="c" style="left:527px;top:618px;width:57px;text-align:center;">0</div>
<div class="c" style="left:585px;top:618px;width:57px;text-align:center;">0</div>
<div class="c" style="left:811px;top:618px;width:8px;text-align:center">-</div>
<div class="c" style="left:781px;top:618px;width:55px;text-align:right">€</div>
<div class="c" style="left:965px;top:618px;width:8px;text-align:center">-</div>
<div class="c" style="left:942px;top:618px;width:48px;text-align:right">€</div>
<div class="c" style="left:1019px;top:618px;width:8px;text-align:center">-</div>
<div class="c" style="left:996px;top:618px;width:48px;text-align:right">€</div>
<div class="c" style="left:1073px;top:618px;width:8px;text-align:center">-</div>
<div class="c" style="left:1050px;top:618px;width:48px;text-align:right">€</div>
<div class="c" style="left:1127px;top:618px;width:8px;text-align:center">-</div>
<div class="c" style="left:1104px;top:618px;width:48px;text-align:right">€</div>
<div class="c" style="left:1181px;top:618px;width:8px;text-align:center">-</div>
<div class="c" style="left:1158px;top:618px;width:48px;text-align:right">€</div>
<div class="c" style="left:1235px;top:618px;width:8px;text-align:center">-</div>
<div class="c" style="left:1212px;top:618px;width:48px;text-align:right">€</div>
<div class="c" style="left:377px;top:633px;width:50px;text-align:center;">0</div>
<div class="c" style="left:428px;top:633px;width:50px;text-align:center;">0</div>
<div class="c" style="left:527px;top:633px;width:57px;text-align:center;">0</div>
<div class="c" style="left:585px;top:633px;width:57px;text-align:center;">0</div>
<div class="c" style="left:811px;top:633px;width:8px;text-align:center">-</div>
<div class="c" style="left:781px;top:633px;width:55px;text-align:right">€</div>
<div class="c" style="left:965px;top:633px;width:8px;text-align:center">-</div>
<div class="c" style="left:942px;top:633px;width:48px;text-align:right">€</div>
<div class="c" style="left:1019px;top:633px;width:8px;text-align:center">-</div>
<div class="c" style="left:996px;top:633px;width:48px;text-align:right">€</div>
<div class="c" style="left:1073px;top:633px;width:8px;text-align:center">-</div>
<div class="c" style="left:1050px;top:633px;width:48px;text-align:right">€</div>
<div class="c" style="left:1127px;top:633px;width:8px;text-align:center">-</div>
<div class="c" style="left:1104px;top:633px;width:48px;text-align:right">€</div>
<div class="c" style="left:1181px;top:633px;width:8px;text-align:center">-</div>
<div class="c" style="left:1158px;top:633px;width:48px;text-align:right">€</div>
<div class="c" style="left:1235px;top:633px;width:8px;text-align:center">-</div>
<div class="c" style="left:1212px;top:633px;width:48px;text-align:right">€</div>
<div class="c" style="left:377px;top:648px;width:50px;text-align:center;">0</div>
<div class="c" style="left:428px;top:648px;width:50px;text-align:center;">0</div>
<div class="c" style="left:527px;top:648px;width:57px;text-align:center;">0</div>
<div class="c" style="left:585px;top:648px;width:57px;text-align:center;">0</div>
<div class="c" style="left:811px;top:648px;width:8px;text-align:center">-</div>
<div class="c" style="left:781px;top:648px;width:55px;text-align:right">€</div>
<div class="c" style="left:965px;top:648px;width:8px;text-align:center">-</div>
<div class="c" style="left:942px;top:648px;width:48px;text-align:right">€</div>
<div class="c" style="left:1019px;top:648px;width:8px;text-align:center">-</div>
<div class="c" style="left:996px;top:648px;width:48px;text-align:right">€</div>
<div class="c" style="left:1073px;top:648px;width:8px;text-align:center">-</div>
<div class="c" style="left:1050px;top:648px;width:48px;text-align:right">€</div>
<div class="c" style="left:1127px;top:648px;width:8px;text-align:center">-</div>
<div class="c" style="left:1104px;top:648px;width:48px;text-align:right">€</div>
<div class="c" style="left:1181px;top:648px;width:8px;text-align:center">-</div>
<div class="c" style="left:1158px;top:648px;width:48px;text-align:right">€</div>
<div class="c" style="left:1235px;top:648px;width:8px;text-align:center">-</div>
<div class="c" style="left:1212px;top:648px;width:48px;text-align:right">€</div>
<div class="c" style="left:377px;top:663px;width:50px;text-align:center;">0</div>
<div class="c" style="left:428px;top:663px;width:50px;text-align:center;">0</div>
<div class="c" style="left:527px;top:663px;width:57px;text-align:center;">0</div>
<div class="c" style="left:585px;top:663px;width:57px;text-align:center;">0</div>
<div class="c" style="left:811px;top:663px;width:8px;text-align:center">-</div>
<div class="c" style="left:781px;top:663px;width:55px;text-align:right">€</div>
<div class="c" style="left:965px;top:663px;width:8px;text-align:center">-</div>
<div class="c" style="left:942px;top:663px;width:48px;text-align:right">€</div>
<div class="c" style="left:1019px;top:663px;width:8px;text-align:center">-</div>
<div class="c" style="left:996px;top:663px;width:48px;text-align:right">€</div>
<div class="c" style="left:1073px;top:663px;width:8px;text-align:center">-</div>
<div class="c" style="left:1050px;top:663px;width:48px;text-align:right">€</div>
<div class="c" style="left:1127px;top:663px;width:8px;text-align:center">-</div>
<div class="c" style="left:1104px;top:663px;width:48px;text-align:right">€</div>
<div class="c" style="left:1181px;top:663px;width:8px;text-align:center">-</div>
<div class="c" style="left:1158px;top:663px;width:48px;text-align:right">€</div>
<div class="c" style="left:1235px;top:663px;width:8px;text-align:center">-</div>
<div class="c" style="left:1212px;top:663px;width:48px;text-align:right">€</div>
<div class="c" style="left:377px;top:678px;width:50px;text-align:center;">0</div>
<div class="c" style="left:428px;top:678px;width:50px;text-align:center;">0</div>
<div class="c" style="left:527px;top:678px;width:57px;text-align:center;">0</div>
<div class="c" style="left:585px;top:678px;width:57px;text-align:center;">0</div>
<div class="c" style="left:811px;top:678px;width:8px;text-align:center">-</div>
<div class="c" style="left:781px;top:678px;width:55px;text-align:right">€</div>
<div class="c" style="left:965px;top:678px;width:8px;text-align:center">-</div>
<div class="c" style="left:942px;top:678px;width:48px;text-align:right">€</div>
<div class="c" style="left:1019px;top:678px;width:8px;text-align:center">-</div>
<div class="c" style="left:996px;top:678px;width:48px;text-align:right">€</div>
<div class="c" style="left:1073px;top:678px;width:8px;text-align:center">-</div>
<div class="c" style="left:1050px;top:678px;width:48px;text-align:right">€</div>
<div class="c" style="left:1127px;top:678px;width:8px;text-align:center">-</div>
<div class="c" style="left:1104px;top:678px;width:48px;text-align:right">€</div>
<div class="c" style="left:1181px;top:678px;width:8px;text-align:center">-</div>
<div class="c" style="left:1158px;top:678px;width:48px;text-align:right">€</div>
<div class="c" style="left:1235px;top:678px;width:8px;text-align:center">-</div>
<div class="c" style="left:1212px;top:678px;width:48px;text-align:right">€</div>
<div class="c" style="left:377px;top:693px;width:50px;text-align:center;">0</div>
<div class="c" style="left:428px;top:693px;width:50px;text-align:center;">0</div>
<div class="c" style="left:527px;top:693px;width:57px;text-align:center;">0</div>
<div class="c" style="left:585px;top:693px;width:57px;text-align:center;">0</div>
<div class="c" style="left:811px;top:693px;width:8px;text-align:center">-</div>
<div class="c" style="left:781px;top:693px;width:55px;text-align:right">€</div>
<div class="c" style="left:965px;top:693px;width:8px;text-align:center">-</div>
<div class="c" style="left:942px;top:693px;width:48px;text-align:right">€</div>
<div class="c" style="left:1019px;top:693px;width:8px;text-align:center">-</div>
<div class="c" style="left:996px;top:693px;width:48px;text-align:right">€</div>
<div class="c" style="left:1073px;top:693px;width:8px;text-align:center">-</div>
<div class="c" style="left:1050px;top:693px;width:48px;text-align:right">€</div>
<div class="c" style="left:1127px;top:693px;width:8px;text-align:center">-</div>
<div class="c" style="left:1104px;top:693px;width:48px;text-align:right">€</div>
<div class="c" style="left:1181px;top:693px;width:8px;text-align:center">-</div>
<div class="c" style="left:1158px;top:693px;width:48px;text-align:right">€</div>
<div class="c" style="left:1235px;top:693px;width:8px;text-align:center">-</div>
<div class="c" style="left:1212px;top:693px;width:48px;text-align:right">€</div>
<div class="c" style="left:377px;top:708px;width:50px;text-align:center;">0</div>
<div class="c" style="left:428px;top:708px;width:50px;text-align:center;">0</div>
<div class="c" style="left:527px;top:708px;width:57px;text-align:center;">0</div>
<div class="c" style="left:585px;top:708px;width:57px;text-align:center;">0</div>
<div class="c" style="left:811px;top:708px;width:8px;text-align:center">-</div>
<div class="c" style="left:781px;top:708px;width:55px;text-align:right">€</div>
<div class="c" style="left:965px;top:708px;width:8px;text-align:center">-</div>
<div class="c" style="left:942px;top:708px;width:48px;text-align:right">€</div>
<div class="c" style="left:1019px;top:708px;width:8px;text-align:center">-</div>
<div class="c" style="left:996px;top:708px;width:48px;text-align:right">€</div>
<div class="c" style="left:1073px;top:708px;width:8px;text-align:center">-</div>
<div class="c" style="left:1050px;top:708px;width:48px;text-align:right">€</div>
<div class="c" style="left:1127px;top:708px;width:8px;text-align:center">-</div>
<div class="c" style="left:1104px;top:708px;width:48px;text-align:right">€</div>
<div class="c" style="left:1181px;top:708px;width:8px;text-align:center">-</div>
<div class="c" style="left:1158px;top:708px;width:48px;text-align:right">€</div>
<div class="c" style="left:1235px;top:708px;width:8px;text-align:center">-</div>
<div class="c" style="left:1212px;top:708px;width:48px;text-align:right">€</div>
<div class="c" style="left:377px;top:723px;width:50px;text-align:center;">0</div>
<div class="c" style="left:428px;top:723px;width:50px;text-align:center;">0</div>
<div class="c" style="left:527px;top:723px;width:57px;text-align:center;">0</div>
<div class="c" style="left:585px;top:723px;width:57px;text-align:center;">0</div>
<div class="c" style="left:811px;top:723px;width:8px;text-align:center">-</div>
<div class="c" style="left:781px;top:723px;width:55px;text-align:right">€</div>
<div class="c" style="left:965px;top:723px;width:8px;text-align:center">-</div>
<div class="c" style="left:942px;top:723px;width:48px;text-align:right">€</div>
<div class="c" style="left:1019px;top:723px;width:8px;text-align:center">-</div>
<div class="c" style="left:996px;top:723px;width:48px;text-align:right">€</div>
<div class="c" style="left:1073px;top:723px;width:8px;text-align:center">-</div>
<div class="c" style="left:1050px;top:723px;width:48px;text-align:right">€</div>
<div class="c" style="left:1127px;top:723px;width:8px;text-align:center">-</div>
<div class="c" style="left:1104px;top:723px;width:48px;text-align:right">€</div>
<div class="c" style="left:1181px;top:723px;width:8px;text-align:center">-</div>
<div class="c" style="left:1158px;top:723px;width:48px;text-align:right">€</div>
<div class="c" style="left:1235px;top:723px;width:8px;text-align:center">-</div>
<div class="c" style="left:1212px;top:723px;width:48px;text-align:right">€</div>
<div class="c" style="left:377px;top:738px;width:50px;text-align:center;">0</div>
<div class="c" style="left:428px;top:738px;width:50px;text-align:center;">0</div>
<div class="c" style="left:527px;top:738px;width:57px;text-align:center;">0</div>
<div class="c" style="left:585px;top:738px;width:57px;text-align:center;">0</div>
<div class="c" style="left:811px;top:738px;width:8px;text-align:center">-</div>
<div class="c" style="left:781px;top:738px;width:55px;text-align:right">€</div>
<div class="c" style="left:965px;top:738px;width:8px;text-align:center">-</div>
<div class="c" style="left:942px;top:738px;width:48px;text-align:right">€</div>
<div class="c" style="left:1019px;top:738px;width:8px;text-align:center">-</div>
<div class="c" style="left:996px;top:738px;width:48px;text-align:right">€</div>
<div class="c" style="left:1073px;top:738px;width:8px;text-align:center">-</div>
<div class="c" style="left:1050px;top:738px;width:48px;text-align:right">€</div>
<div class="c" style="left:1127px;top:738px;width:8px;text-align:center">-</div>
<div class="c" style="left:1104px;top:738px;width:48px;text-align:right">€</div>
<div class="c" style="left:1181px;top:738px;width:8px;text-align:center">-</div>
<div class="c" style="left:1158px;top:738px;width:48px;text-align:right">€</div>
<div class="c" style="left:1235px;top:738px;width:8px;text-align:center">-</div>
<div class="c" style="left:1212px;top:738px;width:48px;text-align:right">€</div>
<div class="c" style="left:377px;top:753px;width:50px;text-align:center;">0</div>
<div class="c" style="left:428px;top:753px;width:50px;text-align:center;">0</div>
<div class="c" style="left:527px;top:753px;width:57px;text-align:center;">0</div>
<div class="c" style="left:585px;top:753px;width:57px;text-align:center;">0</div>
<div class="c" style="left:811px;top:753px;width:8px;text-align:center">-</div>
<div class="c" style="left:781px;top:753px;width:55px;text-align:right">€</div>
<div class="c" style="left:965px;top:753px;width:8px;text-align:center">-</div>
<div class="c" style="left:942px;top:753px;width:48px;text-align:right">€</div>
<div class="c" style="left:1019px;top:753px;width:8px;text-align:center">-</div>
<div class="c" style="left:996px;top:753px;width:48px;text-align:right">€</div>
<div class="c" style="left:1073px;top:753px;width:8px;text-align:center">-</div>
<div class="c" style="left:1050px;top:753px;width:48px;text-align:right">€</div>
<div class="c" style="left:1127px;top:753px;width:8px;text-align:center">-</div>
<div class="c" style="left:1104px;top:753px;width:48px;text-align:right">€</div>
<div class="c" style="left:1181px;top:753px;width:8px;text-align:center">-</div>
<div class="c" style="left:1158px;top:753px;width:48px;text-align:right">€</div>
<div class="c" style="left:1235px;top:753px;width:8px;text-align:center">-</div>
<div class="c" style="left:1212px;top:753px;width:48px;text-align:right">€</div>
<div class="c" style="left:377px;top:768px;width:50px;text-align:center;">0</div>
<div class="c" style="left:428px;top:768px;width:50px;text-align:center;">0</div>
<div class="c" style="left:527px;top:768px;width:57px;text-align:center;">0</div>
<div class="c" style="left:585px;top:768px;width:57px;text-align:center;">0</div>
<div class="c" style="left:811px;top:768px;width:8px;text-align:center">-</div>
<div class="c" style="left:781px;top:768px;width:55px;text-align:right">€</div>
<div class="c" style="left:965px;top:768px;width:8px;text-align:center">-</div>
<div class="c" style="left:942px;top:768px;width:48px;text-align:right">€</div>
<div class="c" style="left:1019px;top:768px;width:8px;text-align:center">-</div>
<div class="c" style="left:996px;top:768px;width:48px;text-align:right">€</div>
<div class="c" style="left:1073px;top:768px;width:8px;text-align:center">-</div>
<div class="c" style="left:1050px;top:768px;width:48px;text-align:right">€</div>
<div class="c" style="left:1127px;top:768px;width:8px;text-align:center">-</div>
<div class="c" style="left:1104px;top:768px;width:48px;text-align:right">€</div>
<div class="c" style="left:1181px;top:768px;width:8px;text-align:center">-</div>
<div class="c" style="left:1158px;top:768px;width:48px;text-align:right">€</div>
<div class="c" style="left:1235px;top:768px;width:8px;text-align:center">-</div>
<div class="c" style="left:1212px;top:768px;width:48px;text-align:right">€</div>
<div class="b" style="left:24px;top:285px;width:44px;height:79px;border:2px solid #217346"></div>
<div class="b" style="left:26px;top:287px;width:40px;height:75px;border:1px solid #e8f5ec"></div>
<div class="b" style="left:64px;top:360px;width:5px;height:5px;background:#217346;outline:1px solid #fff"></div>
<div class="b" style="left:1265px;top:204px;width:20px;height:567px;background:#e6e6e6"></div>
<div class="b" style="left:1268px;top:221px;width:15px;height:536px;background:#dadada"></div>
<div class="b" style="left:1268px;top:206px;width:15px;height:15px;background:#f5f5f5;border:1px solid #ababab"></div>
<div class="b" style="left:1268px;top:221px;width:15px;height:36px;background:#f3f3f3;border:1px solid #ababab"></div>
<div class="b" style="left:1268px;top:757px;width:15px;height:15px;background:#f5f5f5;border:1px solid #b4b4b4"></div>
<div class="b" style="left:0px;top:65px;width:1px;height:755px;background:#d2d2d2"></div>
<div class="b" style="left:1284px;top:65px;width:1px;height:755px;background:#cdcdcd"></div>
<div class="b" style="left:1284px;top:0px;width:1px;height:65px;background:#cfe0d5"></div>
<div class="b" style="left:1px;top:64px;width:60px;height:1px;background:#1d5c37"></div>
<div class="b" style="left:112px;top:64px;width:1172px;height:1px;background:#1d5c37"></div>
<div class="b" style="left:0px;top:771px;width:1285px;height:29px;background:#ececec"></div>
<div class="b" style="left:0px;top:771px;width:1285px;height:1px;background:#b4b4b4"></div>
<div class="b" style="left:0px;top:772px;width:100px;height:27px;background:#e1e1e1"></div>
<div class="b" style="left:0px;top:772px;width:1px;height:27px;background:#f4f4f4"></div>
<div class="b" style="left:100px;top:771px;width:1px;height:25px;background:#b4b4b4"></div>
<div class="b" style="left:101px;top:771px;width:97px;height:23px;background:linear-gradient(#f6f6f4 0%,#f6f6ea 35%,#f2efa8 100%)"></div>
<div class="b" style="left:198px;top:771px;width:1px;height:25px;background:#b4b4b4"></div>
<div class="b" style="left:100px;top:794px;width:99px;height:2px;background:#217346"></div>
<div style="position:absolute;left:112.3px;top:778.21px;font-size:12.75px;line-height:12.75px;color:#217346;white-space:nowrap;"><b>Anlageverm</b></div>
<div class="b" style="left:201px;top:774px;width:88px;height:22px;background:#f2f200"></div>
<div style="position:absolute;left:45.0px;width:400px;text-align:center;top:778.84px;font-size:12px;line-height:12px;color:#222;white-space:nowrap;">GewSt.Zahl</div>
<div class="b" style="left:291px;top:775px;width:1px;height:20px;background:#b4b4b4"></div>
<div class="b" style="left:294px;top:774px;width:71px;height:22px;background:#f2f200"></div>
<div style="position:absolute;left:129.5px;width:400px;text-align:center;top:778.84px;font-size:12px;line-height:12px;color:#222;white-space:nowrap;">USt.Zahl</div>
<div class="b" style="left:367px;top:775px;width:1px;height:20px;background:#b4b4b4"></div>
<div class="b" style="left:370px;top:774px;width:69px;height:22px;background:#f2f200"></div>
<div style="position:absolute;left:204.5px;width:400px;text-align:center;top:778.84px;font-size:12px;line-height:12px;color:#222;white-space:nowrap;">ESt.Zahl</div>
<div class="b" style="left:441px;top:775px;width:1px;height:20px;background:#b4b4b4"></div>
<div class="b" style="left:444px;top:774px;width:122px;height:22px;background:#f2f200"></div>
<div style="position:absolute;left:305.0px;width:400px;text-align:center;top:778.84px;font-size:12px;line-height:12px;color:#222;white-space:nowrap;">Sonst.Leist.Entn.</div>
<div class="b" style="left:568px;top:775px;width:1px;height:20px;background:#b4b4b4"></div>
<div class="b" style="left:571px;top:774px;width:96px;height:22px;background:#f2f200"></div>
<div style="position:absolute;left:419.0px;width:400px;text-align:center;top:778.84px;font-size:12px;line-height:12px;color:#222;white-space:nowrap;">Kfz-Nutzung</div>
<div class="b" style="left:669px;top:775px;width:1px;height:20px;background:#b4b4b4"></div>
<div class="b" style="left:672px;top:774px;width:109px;height:22px;background:#f2f200"></div>
<div style="position:absolute;left:526.5px;width:400px;text-align:center;top:778.84px;font-size:12px;line-height:12px;color:#222;white-space:nowrap;">Arbeitszimmer</div>
<div class="b" style="left:783px;top:775px;width:1px;height:20px;background:#b4b4b4"></div>
<div class="b" style="left:786px;top:774px;width:67px;height:22px;background:#0070c0"></div>
<div style="position:absolute;left:619.5px;width:400px;text-align:center;top:778.84px;font-size:12px;line-height:12px;color:#fff;white-space:nowrap;">pr.Ausg</div>
<div class="b" style="left:855px;top:775px;width:1px;height:20px;background:#b4b4b4"></div>
<div class="b" style="left:858px;top:774px;width:55px;height:22px;background:#92d050"></div>
<div style="position:absolute;left:867px;top:778.84px;font-size:12px;line-height:12px;color:#222;white-space:nowrap;">USt.Vor</div>
<div class="b" style="left:915px;top:775px;width:1px;height:20px;background:#b4b4b4"></div>
<div class="b" style="left:913px;top:772px;width:9px;height:24px;background:#ececec"></div>
<div class="b" style="left:999px;top:778px;width:268px;height:15px;background:#dadada"></div>
<div class="b" style="left:999px;top:778px;width:15px;height:15px;background:#f5f5f5;border:1px solid #b4b4b4"></div>
<div class="b" style="left:1014px;top:778px;width:17px;height:15px;background:#f3f3f3;border:1px solid #ababab"></div>
<div class="b" style="left:1252px;top:778px;width:15px;height:15px;background:#f5f5f5;border:1px solid #b4b4b4"></div>
<div class="b" style="left:0px;top:799px;width:1285px;height:1px;background:#c6c6c6"></div>
<div class="b" style="left:0px;top:800px;width:1285px;height:20px;background:#f1f1f1"></div>
<div style="position:absolute;left:8px;top:804.19px;font-size:11px;line-height:11px;color:#444;white-space:nowrap;">Bereit</div>
<div class="b" style="left:987px;top:800px;width:37px;height:20px;background:#c8c8c8"></div>
<div style="position:absolute;left:1236.5px;top:805.03px;font-size:10.6px;line-height:10.6px;color:#444;white-space:nowrap;">100 %</div>
<svg style="position:absolute;left:0;top:0" width="1285" height="820"><path d="M22,10h14v14h-14z M24.2,11.2h9.6v5.3h-9.6z M25,19h8v3.8h-3.8v-1.8h-2v1.8h-2.2z" fill="#fff" fill-rule="evenodd"/><path d="M52,14 l3.8,-3.8 M52,14 l3.8,3.8 M52,14 h7.5 a4.1,4.1 0 0 1 0,8.2 h-1.5" stroke="#fff" stroke-width="2" fill="none"/><polygon points="70.5,14.75 76.5,14.75 73.5,18.25" fill="#fff"/><path d="M99,14 l-3.8,-3.8 M99,14 l-3.8,3.8 M99,14 h-7.5 a4.1,4.1 0 0 0 0,8.2 h1.5" stroke="#6aa585" stroke-width="2" fill="none"/><polygon points="105.5,14.75 111.5,14.75 108.5,18.25" fill="#6aa585"/><rect x="124" y="13" width="7" height="1.5" fill="#fff"/><polygon points="124.0,15.5 131.0,15.5 127.5,19.5" fill="#fff"/><rect x="1118.5" y="10.5" width="12" height="9" stroke="#a3c5b0" fill="none"/><path d="M1118.5,13.5h12 M1124.5,18.5v-4 M1122.5,16.5l2,-2l2,2" stroke="#a3c5b0" fill="none"/><rect x="1166" y="15" width="10" height="1" fill="#a3c5b0"/><rect x="1212.5" y="10.5" width="9" height="9" stroke="#a3c5b0" fill="none"/><path d="M1258,10 l10,10 M1268,10 l-10,10" stroke="#a3c5b0" stroke-width="1.1"/><path d="M590.3,49.5 a4.8,4.8 0 1 1 7.4,0 l-1,1.8 v1.7 h-5.4 v-1.7 z M591.3,55.2h5.4" stroke="#e0ece4" stroke-width="1.1" fill="none"/><circle cx="1195" cy="44" r="4" stroke="#fff" stroke-width="1.6" fill="none"/><path d="M1188,58 a8,8 0 0 1 10,-8" stroke="#fff" stroke-width="1.6" fill="none"/><path d="M1199,54.5h7 M1202.5,51v7" stroke="#fff" stroke-width="1.6"/><path d="M1267.5,152 l4.5,-4.5 l4.5,4.5" stroke="#6a6a6a" stroke-width="1.6" fill="none"/><rect x="23" y="76" width="24" height="25" fill="#cfcfcf"/><rect x="28" y="75" width="14" height="5" rx="1" fill="#a7a7a7"/><rect x="32" y="73" width="5" height="3" fill="#a7a7a7"/><path d="M37.5,84.5 h9 l4,4 v14 h-13 z" fill="#f7f7f7" stroke="#a8a8a8"/><path d="M46.5,84.5v4h4" fill="none" stroke="#a8a8a8"/><polygon points="30.299999999999997,126.75 38.3,126.75 34.3,131.25" fill="#b5b5b5"/><path d="M66,72 l9,10 M78,72 l-9,10" stroke="#5b5b5b" stroke-width="1.8"/><circle cx="67.5" cy="84" r="2.6" stroke="#4d82b8" stroke-width="1.4" fill="none"/><circle cx="76.5" cy="84" r="2.6" stroke="#4d82b8" stroke-width="1.4" fill="none"/><path d="M64.5,95.5h7l2,2v9h-9z" fill="#fafafa" stroke="#555"/><path d="M66,99h5 M66,101h5 M66,103h5" stroke="#4d82b8"/><path d="M70.5,99.5h6l2.5,2.5v7.5h-8.5z" fill="#fafafa" stroke="#555"/><path d="M72,103h5 M72,105h5 M72,107h5" stroke="#4d82b8"/><polygon points="85.5,100.75 91.5,100.75 88.5,104.25" fill="#5f5f5f"/><path d="M70,121 l5,-4 l4,4 l-5,4 z" fill="#666"/><path d="M78,118.5 l2,-2 l1.5,1.5 l-2,2z" fill="#666"/><path d="M64,124 l6,-3 l4,4 l-4,6 z" fill="#e5bf78"/><text x="270" y="92" font-family="Liberation Sans" font-size="12.5" fill="#444" stroke="#444" stroke-width="0.4">A</text><polygon points="276,80.5 279.5,77.5 283,80.5" fill="#4a86c5"/><text x="293" y="92" font-family="Liberation Sans" font-size="10.5" fill="#444" stroke="#444" stroke-width="0.4">A</text><polygon points="298.5,77.5 305,77.5 301.75,80.5" fill="#4a86c5"/><polygon points="209.7,85.0 216.7,85.0 213.2,89.0" fill="#5f5f5f"/><polygon points="252.7,85.0 259.7,85.0 256.2,89.0" fill="#5f5f5f"/><polygon points="602.9,85.5 609.9,85.5 606.4,89.5" fill="#5f5f5f"/><text x="118" y="122" font-family="Liberation Sans" font-weight="bold" font-size="12" fill="#444">F</text><text x="138" y="122" font-family="Liberation Sans" font-weight="bold" font-style="italic" font-size="12" fill="#444">K</text><text x="160" y="122" font-family="Liberation Sans" font-weight="bold" font-size="12" fill="#444">U</text><rect x="160" y="123.5" width="9" height="1" fill="#444"/><polygon points="178.0,116.5 185.0,116.5 181.5,120.5" fill="#5f5f5f"/><rect x="192" y="107" width="1" height="22" fill="#d0d0d0"/><path d="M201.5,111.5h12v12 M201.5,111.5v12 M207.5,111.5v12 M201.5,117.5h12" stroke="#777" stroke-dasharray="1,1" fill="none"/><rect x="201" y="123" width="13" height="1" fill="#555"/><polygon points="220.8,116.5 227.8,116.5 224.3,120.5" fill="#5f5f5f"/><rect x="235" y="107" width="1" height="22" fill="#d0d0d0"/><path d="M246,116 l5,-5 l5,5 l-5,5 z" fill="#fff" stroke="#555"/><path d="M256,116 q2,2 1.5,4" stroke="#3e7cc0" stroke-width="2" fill="none"/><rect x="250" y="109" width="2" height="5" fill="#555"/><rect x="244" y="122" width="15" height="4" fill="#f2ea00"/><polygon points="264.1,116.5 271.1,116.5 267.6,120.5" fill="#5f5f5f"/><text x="280" y="121" font-family="Liberation Sans" font-size="13" fill="#555">A</text><rect x="277" y="122" width="16" height="4" fill="#e60000"/><polygon points="297.9,116.5 304.9,116.5 301.4,120.5" fill="#5f5f5f"/><rect x="321" y="79" width="14" height="1.2" fill="#6a6a6a"/><rect x="321" y="82.5" width="14" height="1.2" fill="#6a6a6a"/><rect x="321" y="86" width="14" height="1.2" fill="#6a6a6a"/><rect x="343" y="83" width="14" height="1.2" fill="#6a6a6a"/><rect x="343" y="86.5" width="14" height="1.2" fill="#6a6a6a"/><rect x="343" y="90" width="14" height="1.2" fill="#6a6a6a"/><rect x="365" y="88" width="14" height="1.2" fill="#6a6a6a"/><rect x="365" y="91.5" width="14" height="1.2" fill="#6a6a6a"/><rect x="365" y="95" width="14" height="1.2" fill="#6a6a6a"/><rect x="321" y="113" width="14" height="1.2" fill="#6a6a6a"/><rect x="321" y="116" width="10" height="1.2" fill="#6a6a6a"/><rect x="321" y="119" width="14" height="1.2" fill="#6a6a6a"/><rect x="321" y="122" width="10" height="1.2" fill="#6a6a6a"/><rect x="343.0" y="113" width="14" height="1.2" fill="#6a6a6a"/><rect x="365" y="113" width="14" height="1.2" fill="#6a6a6a"/><rect x="345.0" y="116" width="10" height="1.2" fill="#6a6a6a"/><rect x="369" y="116" width="10" height="1.2" fill="#6a6a6a"/><rect x="343.0" y="119" width="14" height="1.2" fill="#6a6a6a"/><rect x="365" y="119" width="14" height="1.2" fill="#6a6a6a"/><rect x="345.0" y="122" width="10" height="1.2" fill="#6a6a6a"/><rect x="369" y="122" width="10" height="1.2" fill="#6a6a6a"/><text x="389" y="89" font-family="Liberation Sans" font-size="10" fill="#555" transform="rotate(-45 394 86)">ab</text><path d="M393,94 l11,-11 M400,83h4v4" stroke="#555" stroke-width="1.2" fill="none"/><polygon points="408.1,85.5 415.1,85.5 411.6,89.5" fill="#5f5f5f"/><path d="M395,111.5h10 M398,115.5h7 M398,119.5h7 M389,123.5h16" stroke="#6a6a6a" stroke-width="1.2"/><path d="M389,117.5 l3.5,-3 v2h4v2h-4v2z" fill="#3e7cc0"/><path d="M417,111.5h10 M420,115.5h7 M420,119.5h7 M411,123.5h16" stroke="#6a6a6a" stroke-width="1.2"/><path d="M419,117.5 l-3.5,-3 v2h-4v2h4v2z" fill="#3e7cc0"/><path d="M434.5,76v54" stroke="#d0d0d0" stroke-dasharray="1,1"/><rect x="442.5" y="79.5" width="9" height="4" fill="#fff" stroke="#666"/><rect x="442.5" y="87.5" width="9" height="6" fill="#fff" stroke="#666"/><path d="M451,81.5h7 M457,84 q1,4 -3,5" stroke="#3e7cc0" stroke-width="1.2" fill="none"/><path d="M453,89 l3,-2 v4z" fill="#3e7cc0"/><path d="M444,89.5h5 M444,91.5h5" stroke="#3e7cc0"/><rect x="442.5" y="110.5" width="14" height="14" fill="#fff" stroke="#666"/><path d="M442.5,114.5h14 M442.5,120.5h14 M449.5,110.5v4 M449.5,120.5v4" stroke="#666" fill="none"/><path d="M445,117.5h9" stroke="#3e7cc0"/><path d="M444,117.5l2,-2v4z M455,117.5l-2,-2v4z" fill="#3e7cc0"/><polygon points="463.0,116.5 470.0,116.5 466.5,120.5" fill="#5f5f5f"/><rect x="486.5" y="110.5" width="15" height="9" fill="#fff" stroke="#3e7cc0" stroke-width="1.5"/><circle cx="493" cy="114.5" r="2" fill="#3e7cc0"/><ellipse cx="497" cy="120" rx="4" ry="1.5" fill="#e3bd71"/><ellipse cx="497" cy="122.5" rx="4" ry="1.5" fill="#e3bd71"/><ellipse cx="491" cy="124" rx="4" ry="1.5" fill="#e3bd71"/><polygon points="506.9,116.5 513.9,116.5 510.4,120.5" fill="#5f5f5f"/><text x="522" y="124" font-family="Liberation Sans" font-size="14" fill="#555">%</text><text x="543" y="121" font-family="Liberation Sans" font-weight="bold" font-size="8.5" fill="#555">000</text><rect x="565" y="107" width="1" height="21" fill="#d0d0d0"/><text x="582.5" y="118" font-family="Liberation Sans" font-size="9.5" fill="#444">0</text><text x="573.5" y="125.5" font-family="Liberation Sans" font-size="9.5" fill="#444">,00</text><path d="M574,113.5h7" stroke="#3e7cc0" stroke-width="1.3"/><path d="M572.5,113.5 l3,-2.5 v5z" fill="#3e7cc0"/><text x="596" y="118" font-family="Liberation Sans" font-size="9.5" fill="#444">,00</text><text x="603.5" y="125.5" font-family="Liberation Sans" font-size="9.5" fill="#444">0</text><path d="M594,121.5h7" stroke="#3e7cc0" stroke-width="1.3"/><path d="M603,121.5 l-3,-2.5 v5z" fill="#3e7cc0"/><path d="M93.5,153.5v-6h6" stroke="#777" fill="none"/><path d="M95,149 l5,5 M100,151v3h-3" stroke="#777" fill="none"/><path d="M302.5,153.5v-6h6" stroke="#777" fill="none"/><path d="M304,149 l5,5 M309,151v3h-3" stroke="#777" fill="none"/><path d="M470.5,153.5v-6h6" stroke="#777" fill="none"/><path d="M472,149 l5,5 M477,151v3h-3" stroke="#777" fill="none"/><path d="M610.5,153.5v-6h6" stroke="#777" fill="none"/><path d="M612,149 l5,5 M617,151v3h-3" stroke="#777" fill="none"/><rect x="651.5" y="73.5" width="27" height="24" fill="#fff" stroke="#7a7a7a"/><path d="M658.5,73.5v24" stroke="#9a9a9a"/><path d="M665.5,73.5v24" stroke="#9a9a9a"/><path d="M672.5,73.5v24" stroke="#9a9a9a"/><path d="M651.5,79.5h27" stroke="#9a9a9a"/><path d="M651.5,85.5h27" stroke="#9a9a9a"/><path d="M651.5,91.5h27" stroke="#9a9a9a"/><rect x="659" y="74" width="6" height="5" fill="#e0583a"/><rect x="659" y="80" width="12" height="5" fill="#3a78c2"/><rect x="659" y="86" width="9" height="5" fill="#e0583a"/><rect x="659" y="92" width="5" height="5" fill="#3a78c2"/><rect x="665.5" y="90.5" width="15" height="12" fill="#fafafa" stroke="#7a7a7a"/><path d="M669,95h8 M669,98.5h8 M676,92.5 l-6,9" stroke="#333" stroke-width="1.2" fill="none"/><polygon points="699.5,129.5 704.5,129.5 702,132.5" fill="#5f5f5f"/><rect x="732.5" y="75.5" width="24" height="20" fill="#fff" stroke="#7a7a7a"/><rect x="739" y="81" width="17" height="14" fill="#c3d4e6"/><path d="M738.5,75.5v20" stroke="#9a9a9a"/><path d="M744.5,75.5v20" stroke="#9a9a9a"/><path d="M750.5,75.5v20" stroke="#9a9a9a"/><path d="M732.5,80.5h24" stroke="#9a9a9a"/><path d="M732.5,85.5h24" stroke="#9a9a9a"/><path d="M732.5,90.5h24" stroke="#9a9a9a"/><path d="M763,80 l-1,5 l-8,9 l-3,-3 l8,-9 z" fill="#777"/><path d="M750,92 l3,3 q-3,7 -14,8 q3,-8 11,-11z" fill="#3d7bc0"/><circle cx="749.5" cy="96" r="1.6" fill="#dfe9f5"/><polygon points="775.0,129.5 780.0,129.5 777.5,132.5" fill="#5f5f5f"/><rect x="829.5" y="73.5" width="25" height="21" fill="#fff" stroke="#7a7a7a"/><rect x="835" y="78" width="13" height="11" fill="#c3d4e6"/><path d="M834.5,73.5v21 M848.5,73.5v21 M829.5,77.5h25 M829.5,89.5h25" stroke="#7a7a7a" fill="none"/><path d="M859,78 l-1,5 l-8,9 l-3,-3 l8,-9 z" fill="#777"/><path d="M846,90 l3,3 q-3,7 -13,8 q3,-8 10,-11z" fill="#3d7bc0"/><circle cx="845.5" cy="94" r="1.6" fill="#dfe9f5"/><polygon points="839.8,128.0 844.8,128.0 842.3,131.0" fill="#5f5f5f"/><path d="M914.5,71.5h8v4h-8z M914.5,79.5h4v4h-4z M914.5,83.5h4v3h-4z M918.5,83.5h4v3h-4z" fill="none" stroke="#666"/><rect x="921.5" y="77.5" width="8" height="4" fill="#c8d6e6" stroke="#888"/><path d="M914,79.5h7" stroke="#3e7cc0" stroke-width="1.5"/><path d="M913,79.5l3,-3v6z" fill="#3e7cc0"/><polygon points="988.7,78.0 995.7,78.0 992.2,82.0" fill="#5f5f5f"/><path d="M914.5,94.5h8v4h-8z M914.5,102.5h4v4h-4z M914.5,106.5h4v3h-4z" fill="none" stroke="#666"/><rect x="918.5" y="99.5" width="5" height="4" fill="#c8d6e6" stroke="#888"/><path d="M923,99 l6,6 M929,99 l-6,6" stroke="#e0583a" stroke-width="1.5"/><polygon points="986.0,101.0 993.0,101.0 989.5,105.0" fill="#5f5f5f"/><rect x="914.5" y="120.5" width="15" height="11" fill="#fff" stroke="#666"/><path d="M914.5,124.5h15 M914.5,128h15 M919.5,120.5v11 M924.5,120.5v11" stroke="#888" fill="none"/><rect x="915" y="125" width="5" height="3" fill="#3e7cc0"/><path d="M914.5,117.5h15" stroke="#3e7cc0" stroke-dasharray="1,1"/><polygon points="974.1,124.5 979.1,124.5 976.6,127.5" fill="#5f5f5f"/><path d="M1012.5,71.5h14v2.5h-10l5,5.5l-5,5.5h10v2h-14v-2l5.5,-5.5l-5.5,-5.5z" fill="#444"/><polygon points="1033.5,77.75 1039.5,77.75 1036.5,81.25" fill="#5f5f5f"/><rect x="1013.5" y="94.5" width="13" height="15" fill="#fff" stroke="#777"/><rect x="1013" y="94" width="14" height="3" fill="#777"/><path d="M1020,99v7" stroke="#3e7cc0" stroke-width="2"/><path d="M1016.5,103.5l3.5,4l3.5,-4z" fill="#3e7cc0"/><polygon points="1031.8,100.75 1037.8,100.75 1034.8,104.25" fill="#5f5f5f"/><path d="M1014,126 l7,-7 l5,4 l-7,7 z" fill="#ec8795"/><path d="M1014,126 l4,4" stroke="#fff" stroke-width="1"/><polygon points="1031.8,123.75 1037.8,123.75 1034.8,127.25" fill="#5f5f5f"/><text x="1066.5" y="86" font-family="Liberation Sans" font-weight="bold" font-size="15" fill="#3e7cc0">A</text><text x="1067" y="100" font-family="Liberation Sans" font-weight="bold" font-size="14" fill="#9b59c0">Z</text><path d="M1079,81h17l-6.5,7v8h-4v-8z" fill="#777"/><path d="M1086.5,88v7h2v-7" fill="#fff"/><polygon points="1096.5,129.5 1101.5,129.5 1099,132.5" fill="#5f5f5f"/><circle cx="1158" cy="82.5" r="8" stroke="#3f78b9" stroke-width="2.6" fill="none"/><path d="M1152,89 l-9,9" stroke="#3f78b9" stroke-width="3.2" stroke-linecap="round"/><polygon points="1182.5,129.5 1187.5,129.5 1185,132.5" fill="#5f5f5f"/><path d="M150.5,176.5l10,9 M160.5,176.5l-10,9" stroke="#b4b4b4" stroke-width="1.3"/><path d="M186,181 l4,4.5 l8.5,-9" stroke="#b4b4b4" stroke-width="2" fill="none"/><text x="222" y="186" font-family="Liberation Serif" font-style="italic" font-weight="bold" font-size="14" fill="#555">f</text><text x="228" y="186" font-family="Liberation Serif" font-style="italic" font-size="10" fill="#555">x</text><rect x="121" y="176.0" width="2" height="2" fill="#9a9a9a"/><rect x="121" y="180.5" width="2" height="2" fill="#9a9a9a"/><rect x="121" y="185.0" width="2" height="2" fill="#9a9a9a"/><polygon points="92.0,178.05 100.0,178.05 96,182.55" fill="#606060"/><path d="M1269,178.5l3.7,3.7l3.7,-3.7" stroke="#666" stroke-width="1.6" fill="none"/><rect x="5.5" y="206.5" width="13" height="13" fill="#e4e4e4" stroke="#888"/><rect x="5.5" y="220.5" width="13" height="13" fill="#e4e4e4" stroke="#888"/><text x="12" y="217.5" text-anchor="middle" font-family="Liberation Sans" font-size="10.5" fill="#444">1</text><text x="12" y="231.5" text-anchor="middle" font-family="Liberation Sans" font-size="10.5" fill="#444">2</text><path d="M944,216v-5h320" stroke="#a0a0a0" stroke-width="2" fill="none"/><rect x="968" y="224" width="2" height="2" fill="#777"/><rect x="1022" y="224" width="2" height="2" fill="#777"/><rect x="1076" y="224" width="2" height="2" fill="#777"/><rect x="1130" y="224" width="2" height="2" fill="#777"/><rect x="1184" y="224" width="2" height="2" fill="#777"/><rect x="1238" y="224" width="2" height="2" fill="#777"/><polygon points="31,780.5 31,788.5 27,784.5" fill="#1e5e3a"/><polygon points="56,780.5 56,788.5 60,784.5" fill="#1e5e3a"/><rect x="81" y="787" width="2" height="2" fill="#1e3e2a"/><rect x="85" y="787" width="2" height="2" fill="#1e3e2a"/><rect x="89" y="787" width="2" height="2" fill="#1e3e2a"/><rect x="922" y="787" width="2" height="2" fill="#1e5e3a"/><rect x="926" y="787" width="2" height="2" fill="#1e5e3a"/><rect x="930" y="787" width="2" height="2" fill="#1e5e3a"/><circle cx="953.5" cy="784.5" r="7" stroke="#7a7a7a" stroke-width="1.3" fill="none"/><path d="M949.5,784.5h8 M953.5,780.5v8" stroke="#7a7a7a" stroke-width="1.6"/><rect x="982" y="779.5" width="1.5" height="1.5" fill="#a8a8a8"/><rect x="982" y="784" width="1.5" height="1.5" fill="#a8a8a8"/><rect x="982" y="788.5" width="1.5" height="1.5" fill="#a8a8a8"/><polygon points="1008,781.5 1008,789.5 1004,785.5" fill="#6a6a6a"/><polygon points="1258,781.5 1258,789.5 1262,785.5" fill="#6a6a6a"/><polygon points="1271.5,216.5 1279.5,216.5 1275.5,212" fill="#6a6a6a"/><polygon points="1271.5,762.5 1279.5,762.5 1275.5,767" fill="#6a6a6a"/><rect x="999.5" y="802.5" width="13" height="13" fill="none" stroke="#777"/><path d="M1003.5,802.5v13 M1008.5,802.5v13 M999.5,806.5h13 M999.5,811.5h13" stroke="#777"/><rect x="1036.5" y="802.5" width="14" height="13" fill="none" stroke="#777"/><rect x="1038.5" y="804.5" width="10" height="9" fill="none" stroke="#777"/><path d="M1040.5,806.5h6 M1040.5,808.5h6 M1040.5,810.5h6" stroke="#777"/><rect x="1074.5" y="802.5" width="13" height="13" fill="none" stroke="#777"/><path d="M1079.5,802.5v5h8 M1083.5,802.5v5" stroke="#777" fill="none"/><rect x="1106" y="809" width="6" height="1.6" fill="#555"/><rect x="1115" y="809" width="100" height="1" fill="#9a9a9a"/><rect x="1163" y="803" width="4" height="12" fill="#666"/><path d="M1218,809.5h8 M1222,805.5v8" stroke="#555" stroke-width="1.7"/></svg>
</body></html>
